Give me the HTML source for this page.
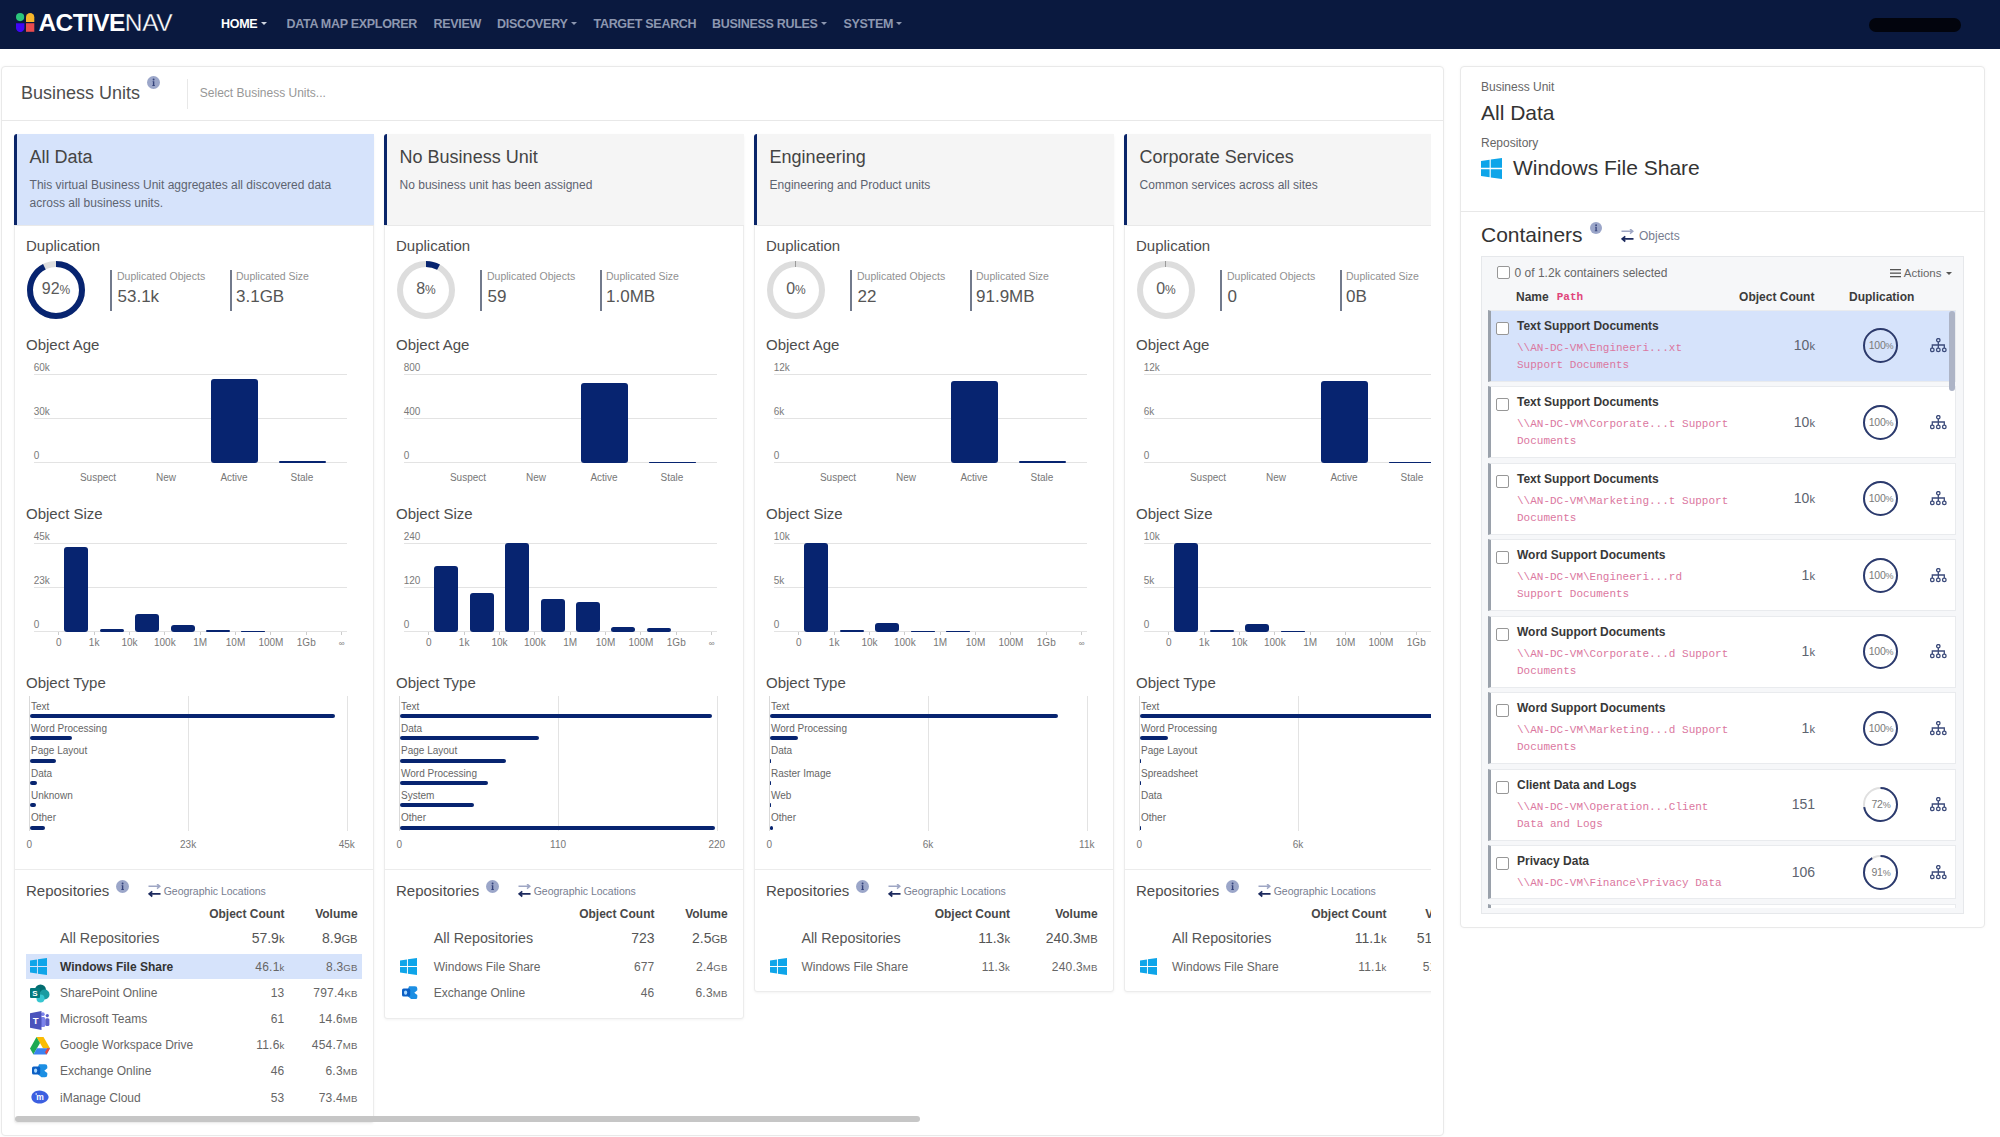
<!DOCTYPE html>
<html><head><meta charset="utf-8"><title>ActiveNav</title>
<style>
html,body{margin:0;padding:0;}
body{width:2000px;height:1137px;overflow:hidden;position:relative;background:#fff;font-family:"Liberation Sans", sans-serif;}
.t{position:absolute;white-space:nowrap;}
</style></head><body>
<div style="position:absolute;left:0.00px;top:0.00px;width:2000.00px;height:49.00px;background:#0a193f;"></div>
<svg style="position:absolute;left:15.8px;top:12.8px" width="19" height="19" viewBox="0 0 19 19">
<circle cx="4.1" cy="4.1" r="4.1" fill="#2cc57c"/>
<path d="M10 9 V4.2 A4.15 4.15 0 0 1 18.3 4.2 V9 Z" fill="#f7b52a"/>
<path d="M0 10.2 H8.4 V14.9 A4.2 4.2 0 0 1 0 14.9 Z" fill="#3f06f5"/>
<rect x="10" y="10.2" width="8.3" height="8.6" fill="#e94b4e"/>
</svg>
<div class="t" style="left:38.50px;top:10.76px;font-size:24.5px;line-height:24.5px;color:#fff;font-weight:400;font-family:'Liberation Sans', sans-serif;"><span style="font-weight:700;letter-spacing:-0.6px">ACTIVE</span><span style="font-weight:400;letter-spacing:-0.3px;-webkit-text-stroke:0.3px #0a193f">NAV</span></div>
<div class="t" style="left:221.00px;top:18.12px;font-size:12.5px;line-height:12.5px;color:#ffffff;font-weight:700;font-family:'Liberation Sans', sans-serif;letter-spacing:-0.3px;">HOME</div>
<div class="t" style="left:286.50px;top:18.12px;font-size:12.5px;line-height:12.5px;color:#8d97b0;font-weight:700;font-family:'Liberation Sans', sans-serif;letter-spacing:-0.3px;">DATA MAP EXPLORER</div>
<div class="t" style="left:433.50px;top:18.12px;font-size:12.5px;line-height:12.5px;color:#8d97b0;font-weight:700;font-family:'Liberation Sans', sans-serif;letter-spacing:-0.3px;">REVIEW</div>
<div class="t" style="left:497.00px;top:18.12px;font-size:12.5px;line-height:12.5px;color:#8d97b0;font-weight:700;font-family:'Liberation Sans', sans-serif;letter-spacing:-0.3px;">DISCOVERY</div>
<div class="t" style="left:593.50px;top:18.12px;font-size:12.5px;line-height:12.5px;color:#8d97b0;font-weight:700;font-family:'Liberation Sans', sans-serif;letter-spacing:-0.3px;">TARGET SEARCH</div>
<div class="t" style="left:712.00px;top:18.12px;font-size:12.5px;line-height:12.5px;color:#8d97b0;font-weight:700;font-family:'Liberation Sans', sans-serif;letter-spacing:-0.3px;">BUSINESS RULES</div>
<div class="t" style="left:843.50px;top:18.12px;font-size:12.5px;line-height:12.5px;color:#8d97b0;font-weight:700;font-family:'Liberation Sans', sans-serif;letter-spacing:-0.3px;">SYSTEM</div>
<div style="position:absolute;left:261px;top:22px;width:0;height:0;border-left:3px solid transparent;border-right:3px solid transparent;border-top:3px solid #cfd5e0;"></div>
<div style="position:absolute;left:571px;top:22px;width:0;height:0;border-left:3px solid transparent;border-right:3px solid transparent;border-top:3px solid #8d97b0;"></div>
<div style="position:absolute;left:821px;top:22px;width:0;height:0;border-left:3px solid transparent;border-right:3px solid transparent;border-top:3px solid #8d97b0;"></div>
<div style="position:absolute;left:895.5px;top:22px;width:0;height:0;border-left:3px solid transparent;border-right:3px solid transparent;border-top:3px solid #8d97b0;"></div>
<div style="position:absolute;left:1869.00px;top:17.50px;width:92.00px;height:14.50px;background:#02040d;border-radius:8px;"></div>
<div style="position:absolute;left:1.00px;top:66.00px;width:1443.00px;height:1070.00px;background:#fff;border:1px solid #e9e9e9;border-radius:4px;box-sizing:border-box;box-shadow:0 0 3px rgba(0,0,0,0.04);"></div>
<div class="t" style="left:21.00px;top:83.76px;font-size:18px;line-height:18px;color:#4d4d4d;font-weight:400;font-family:'Liberation Sans', sans-serif;">Business Units</div>
<svg style="position:absolute;left:147px;top:76px" width="13" height="13" viewBox="0 0 13 13"><circle cx="6.5" cy="6.5" r="6.5" fill="#9ba6c9"/><path d="M5.6 5.2 H7.3 V9.2 H8 V10 H5.2 V9.2 H5.9 V6 H5.6 Z" fill="#34427a"/><circle cx="6.6" cy="3.5" r="0.95" fill="#34427a"/></svg>
<div style="position:absolute;left:186.50px;top:79.00px;width:1.00px;height:30.00px;background:#e8e8e8;"></div>
<div class="t" style="left:199.80px;top:86.84px;font-size:12px;line-height:12px;color:#979797;font-weight:400;font-family:'Liberation Sans', sans-serif;">Select Business Units...</div>
<div style="position:absolute;left:1.00px;top:120.00px;width:1442.00px;height:1.00px;background:#e8e8e8;"></div>
<div style="position:absolute;left:0;top:0;width:1431px;height:1137px;overflow:hidden;">
<div style="position:absolute;left:14.00px;top:134.00px;width:360.00px;height:989.00px;background:#fff;border:1px solid #ececec;border-radius:3px;box-sizing:border-box;box-shadow:0 1px 3px rgba(0,0,0,0.05);"></div>
<div style="position:absolute;left:14.00px;top:134.00px;width:360.00px;height:91.00px;background:#d6e3fb;border-left:3px solid #0a2569;border-radius:3px 0 0 0;box-sizing:border-box;"></div>
<div style="position:absolute;left:14.00px;top:225.00px;width:360.00px;height:1.00px;background:#e9e9e9;"></div>
<div class="t" style="left:29.60px;top:148.06px;font-size:18px;line-height:18px;color:#444;font-weight:400;font-family:'Liberation Sans', sans-serif;">All Data</div>
<div class="t" style="left:29.60px;top:178.84px;font-size:12px;line-height:12px;color:#5d6370;font-weight:400;font-family:'Liberation Sans', sans-serif;">This virtual Business Unit aggregates all discovered data</div>
<div class="t" style="left:29.60px;top:196.84px;font-size:12px;line-height:12px;color:#5d6370;font-weight:400;font-family:'Liberation Sans', sans-serif;">across all business units.</div>
<div class="t" style="left:26.00px;top:238.30px;font-size:15px;line-height:15px;color:#4d4d4d;font-weight:400;font-family:'Liberation Sans', sans-serif;">Duplication</div>
<svg style="position:absolute;left:27.00px;top:261.00px" width="58" height="58" viewBox="0 0 58 58"><circle cx="29.0" cy="29.0" r="26.0" fill="none" stroke="#dddddd" stroke-width="6"/><circle cx="29.0" cy="29.0" r="26.0" fill="none" stroke="#072470" stroke-width="6" stroke-dasharray="150.29 163.36" transform="rotate(-90 29.0 29.0)"/></svg>
<div class="t" style="left:40.50px;top:281.46px;font-size:16px;line-height:16px;color:#5a5a5a;font-weight:400;font-family:'Liberation Sans', sans-serif;width:31px;text-align:center;">92<span style="font-size:12px">%</span></div>
<div style="position:absolute;left:110.00px;top:269.50px;width:2.00px;height:41.00px;background:#727a8c;"></div>
<div class="t" style="left:117.00px;top:271.11px;font-size:10.5px;line-height:10.5px;color:#909090;font-weight:400;font-family:'Liberation Sans', sans-serif;">Duplicated Objects</div>
<div class="t" style="left:117.50px;top:288.11px;font-size:17px;line-height:17px;color:#555;font-weight:400;font-family:'Liberation Sans', sans-serif;">53.1k</div>
<div style="position:absolute;left:229.50px;top:269.50px;width:2.00px;height:41.00px;background:#727a8c;"></div>
<div class="t" style="left:236.00px;top:271.11px;font-size:10.5px;line-height:10.5px;color:#909090;font-weight:400;font-family:'Liberation Sans', sans-serif;">Duplicated Size</div>
<div class="t" style="left:236.00px;top:288.11px;font-size:17px;line-height:17px;color:#555;font-weight:400;font-family:'Liberation Sans', sans-serif;">3.1GB</div>
<div class="t" style="left:26.00px;top:337.30px;font-size:15px;line-height:15px;color:#4d4d4d;font-weight:400;font-family:'Liberation Sans', sans-serif;">Object Age</div>
<div style="position:absolute;left:33.70px;top:373.80px;width:313.60px;height:1.00px;background:#e3e3e3;"></div>
<div class="t" style="left:33.70px;top:362.54px;font-size:10px;line-height:10px;color:#7a7a7a;font-weight:400;font-family:'Liberation Sans', sans-serif;">60k</div>
<div style="position:absolute;left:33.70px;top:417.90px;width:313.60px;height:1.00px;background:#e3e3e3;"></div>
<div class="t" style="left:33.70px;top:406.63px;font-size:10px;line-height:10px;color:#7a7a7a;font-weight:400;font-family:'Liberation Sans', sans-serif;">30k</div>
<div style="position:absolute;left:33.70px;top:462.10px;width:313.60px;height:1.00px;background:#e3e3e3;"></div>
<div class="t" style="left:33.70px;top:450.84px;font-size:10px;line-height:10px;color:#7a7a7a;font-weight:400;font-family:'Liberation Sans', sans-serif;">0</div>
<div class="t" style="left:58.00px;width:80px;text-align:center;top:472.94px;font-size:10px;line-height:10px;color:#777;font-weight:400;font-family:'Liberation Sans', sans-serif;">Suspect</div>
<div class="t" style="left:126.00px;width:80px;text-align:center;top:472.94px;font-size:10px;line-height:10px;color:#777;font-weight:400;font-family:'Liberation Sans', sans-serif;">New</div>
<div class="t" style="left:194.00px;width:80px;text-align:center;top:472.94px;font-size:10px;line-height:10px;color:#777;font-weight:400;font-family:'Liberation Sans', sans-serif;">Active</div>
<div style="position:absolute;left:210.50px;top:378.72px;width:47.00px;height:83.89px;background:#072470;border-radius:3px;"></div>
<div class="t" style="left:262.00px;width:80px;text-align:center;top:472.94px;font-size:10px;line-height:10px;color:#777;font-weight:400;font-family:'Liberation Sans', sans-serif;">Stale</div>
<div style="position:absolute;left:278.50px;top:460.83px;width:47.00px;height:1.77px;background:#072470;border-radius:3px;"></div>
<div class="t" style="left:26.00px;top:505.60px;font-size:15px;line-height:15px;color:#4d4d4d;font-weight:400;font-family:'Liberation Sans', sans-serif;">Object Size</div>
<div style="position:absolute;left:33.70px;top:542.90px;width:313.60px;height:1.00px;background:#e3e3e3;"></div>
<div class="t" style="left:33.70px;top:531.63px;font-size:10px;line-height:10px;color:#7a7a7a;font-weight:400;font-family:'Liberation Sans', sans-serif;">45k</div>
<div style="position:absolute;left:33.70px;top:586.80px;width:313.60px;height:1.00px;background:#e3e3e3;"></div>
<div class="t" style="left:33.70px;top:575.53px;font-size:10px;line-height:10px;color:#7a7a7a;font-weight:400;font-family:'Liberation Sans', sans-serif;">23k</div>
<div style="position:absolute;left:33.70px;top:631.10px;width:313.60px;height:1.00px;background:#e3e3e3;"></div>
<div class="t" style="left:33.70px;top:619.84px;font-size:10px;line-height:10px;color:#7a7a7a;font-weight:400;font-family:'Liberation Sans', sans-serif;">0</div>
<div style="position:absolute;left:58.30px;top:632.00px;width:1.00px;height:3.00px;background:#ccc;"></div>
<div class="t" style="left:38.80px;width:40px;text-align:center;top:637.93px;font-size:10px;line-height:10px;color:#777;font-weight:400;font-family:'Liberation Sans', sans-serif;">0</div>
<div style="position:absolute;left:93.65px;top:632.00px;width:1.00px;height:3.00px;background:#ccc;"></div>
<div class="t" style="left:74.15px;width:40px;text-align:center;top:637.93px;font-size:10px;line-height:10px;color:#777;font-weight:400;font-family:'Liberation Sans', sans-serif;">1k</div>
<div style="position:absolute;left:129.00px;top:632.00px;width:1.00px;height:3.00px;background:#ccc;"></div>
<div class="t" style="left:109.50px;width:40px;text-align:center;top:637.93px;font-size:10px;line-height:10px;color:#777;font-weight:400;font-family:'Liberation Sans', sans-serif;">10k</div>
<div style="position:absolute;left:164.35px;top:632.00px;width:1.00px;height:3.00px;background:#ccc;"></div>
<div class="t" style="left:144.85px;width:40px;text-align:center;top:637.93px;font-size:10px;line-height:10px;color:#777;font-weight:400;font-family:'Liberation Sans', sans-serif;">100k</div>
<div style="position:absolute;left:199.70px;top:632.00px;width:1.00px;height:3.00px;background:#ccc;"></div>
<div class="t" style="left:180.20px;width:40px;text-align:center;top:637.93px;font-size:10px;line-height:10px;color:#777;font-weight:400;font-family:'Liberation Sans', sans-serif;">1M</div>
<div style="position:absolute;left:235.05px;top:632.00px;width:1.00px;height:3.00px;background:#ccc;"></div>
<div class="t" style="left:215.55px;width:40px;text-align:center;top:637.93px;font-size:10px;line-height:10px;color:#777;font-weight:400;font-family:'Liberation Sans', sans-serif;">10M</div>
<div style="position:absolute;left:270.40px;top:632.00px;width:1.00px;height:3.00px;background:#ccc;"></div>
<div class="t" style="left:250.90px;width:40px;text-align:center;top:637.93px;font-size:10px;line-height:10px;color:#777;font-weight:400;font-family:'Liberation Sans', sans-serif;">100M</div>
<div style="position:absolute;left:305.75px;top:632.00px;width:1.00px;height:3.00px;background:#ccc;"></div>
<div class="t" style="left:286.25px;width:40px;text-align:center;top:637.93px;font-size:10px;line-height:10px;color:#777;font-weight:400;font-family:'Liberation Sans', sans-serif;">1Gb</div>
<div style="position:absolute;left:341.10px;top:632.00px;width:1.00px;height:3.00px;background:#ccc;"></div>
<div class="t" style="left:321.60px;width:40px;text-align:center;top:639.63px;font-size:8px;line-height:8px;color:#777;font-weight:400;font-family:'Liberation Sans', sans-serif;">&#8734;</div>
<div style="position:absolute;left:64.47px;top:547.37px;width:24.00px;height:84.23px;background:#072470;border-radius:3px;"></div>
<div style="position:absolute;left:99.83px;top:628.95px;width:24.00px;height:2.65px;background:#072470;border-radius:3px;"></div>
<div style="position:absolute;left:135.18px;top:613.96px;width:24.00px;height:17.64px;background:#072470;border-radius:3px;"></div>
<div style="position:absolute;left:170.53px;top:625.43px;width:24.00px;height:6.17px;background:#072470;border-radius:3px;"></div>
<div style="position:absolute;left:205.88px;top:629.84px;width:24.00px;height:1.76px;background:#072470;border-radius:3px;"></div>
<div style="position:absolute;left:241.23px;top:631.16px;width:24.00px;height:0.44px;background:#072470;border-radius:3px;"></div>
<div class="t" style="left:26.00px;top:674.90px;font-size:15px;line-height:15px;color:#4d4d4d;font-weight:400;font-family:'Liberation Sans', sans-serif;">Object Type</div>
<div style="position:absolute;left:29.00px;top:696.00px;width:1.00px;height:135.00px;background:#d9d9d9;"></div>
<div style="position:absolute;left:188.20px;top:696.00px;width:1.00px;height:135.00px;background:#e3e3e3;"></div>
<div style="position:absolute;left:346.80px;top:696.00px;width:1.00px;height:135.00px;background:#e3e3e3;"></div>
<div class="t" style="left:31.00px;top:701.53px;font-size:10px;line-height:10px;color:#666;font-weight:400;font-family:'Liberation Sans', sans-serif;">Text</div>
<div style="position:absolute;left:29.50px;top:714.00px;width:305.71px;height:4.00px;background:#072470;border-radius:2px;"></div>
<div class="t" style="left:31.00px;top:723.89px;font-size:10px;line-height:10px;color:#666;font-weight:400;font-family:'Liberation Sans', sans-serif;">Word Processing</div>
<div style="position:absolute;left:29.50px;top:736.36px;width:42.45px;height:4.00px;background:#072470;border-radius:2px;"></div>
<div class="t" style="left:31.00px;top:746.25px;font-size:10px;line-height:10px;color:#666;font-weight:400;font-family:'Liberation Sans', sans-serif;">Page Layout</div>
<div style="position:absolute;left:29.50px;top:758.72px;width:26.61px;height:4.00px;background:#072470;border-radius:2px;"></div>
<div class="t" style="left:31.00px;top:768.62px;font-size:10px;line-height:10px;color:#666;font-weight:400;font-family:'Liberation Sans', sans-serif;">Data</div>
<div style="position:absolute;left:29.50px;top:781.08px;width:7.92px;height:4.00px;background:#072470;border-radius:2px;"></div>
<div class="t" style="left:31.00px;top:790.98px;font-size:10px;line-height:10px;color:#666;font-weight:400;font-family:'Liberation Sans', sans-serif;">Unknown</div>
<div style="position:absolute;left:29.50px;top:803.44px;width:6.34px;height:4.00px;background:#072470;border-radius:2px;"></div>
<div class="t" style="left:31.00px;top:813.33px;font-size:10px;line-height:10px;color:#666;font-weight:400;font-family:'Liberation Sans', sans-serif;">Other</div>
<div style="position:absolute;left:29.50px;top:825.80px;width:15.52px;height:4.00px;background:#072470;border-radius:2px;"></div>
<div class="t" style="left:9.40px;width:40px;text-align:center;top:839.53px;font-size:10px;line-height:10px;color:#777;font-weight:400;font-family:'Liberation Sans', sans-serif;">0</div>
<div class="t" style="left:168.10px;width:40px;text-align:center;top:839.53px;font-size:10px;line-height:10px;color:#777;font-weight:400;font-family:'Liberation Sans', sans-serif;">23k</div>
<div class="t" style="left:326.80px;width:40px;text-align:center;top:839.53px;font-size:10px;line-height:10px;color:#777;font-weight:400;font-family:'Liberation Sans', sans-serif;">45k</div>
<div style="position:absolute;left:14.00px;top:869.00px;width:360.00px;height:1.00px;background:#ececec;"></div>
<div class="t" style="left:26.00px;top:882.90px;font-size:15px;line-height:15px;color:#4d4d4d;font-weight:400;font-family:'Liberation Sans', sans-serif;">Repositories</div>
<svg style="position:absolute;left:115.6px;top:880px" width="13" height="13" viewBox="0 0 13 13"><circle cx="6.5" cy="6.5" r="6.5" fill="#9ba6c9"/><path d="M5.6 5.2 H7.3 V9.2 H8 V10 H5.2 V9.2 H5.9 V6 H5.6 Z" fill="#34427a"/><circle cx="6.6" cy="3.5" r="0.95" fill="#34427a"/></svg>
<svg style="position:absolute;left:148px;top:884px" width="13" height="14" viewBox="0 0 13 14"><path d="M0.5 2.3 H11.5 M9 0 L11.8 2.3 L9 4.6" stroke="#9ea6c4" stroke-width="1.5" fill="none"/><path d="M12.5 9.9 H1.5 M4.3 7.3 L1.2 9.9 L4.3 12.5" stroke="#1c2a5e" stroke-width="1.7" fill="none"/></svg>
<div class="t" style="left:163.70px;top:886.11px;font-size:10.5px;line-height:10.5px;color:#777d90;font-weight:400;font-family:'Liberation Sans', sans-serif;">Geographic Locations</div>
<div class="t" style="left:164.50px;width:120px;text-align:right;top:908.34px;font-size:12px;line-height:12px;color:#484848;font-weight:700;font-family:'Liberation Sans', sans-serif;">Object Count</div>
<div class="t" style="left:277.60px;width:80px;text-align:right;top:908.34px;font-size:12px;line-height:12px;color:#484848;font-weight:700;font-family:'Liberation Sans', sans-serif;">Volume</div>
<div class="t" style="left:60.00px;top:930.90px;font-size:14.3px;line-height:14.3px;color:#555;font-weight:400;font-family:'Liberation Sans', sans-serif;">All Repositories</div>
<div class="t" style="left:184.50px;width:100px;text-align:right;top:931.15px;font-size:14px;line-height:14px;color:#555;font-weight:400;font-family:'Liberation Sans', sans-serif;">57.9<span style="font-size:0.8em">k</span></div>
<div class="t" style="left:257.60px;width:100px;text-align:right;top:931.15px;font-size:14px;line-height:14px;color:#555;font-weight:400;font-family:'Liberation Sans', sans-serif;">8.9<span style="font-size:0.8em">GB</span></div>
<div style="position:absolute;left:26.00px;top:954.30px;width:336.00px;height:25.10px;background:#d6e3fb;"></div>
<svg style="position:absolute;left:30px;top:957.8px" width="17" height="17" viewBox="0 0 20 20"><path d="M0 2.8 L8.2 1.7 V9.4 H0 Z M9.3 1.5 L20 0 V9.4 H9.3 Z M0 10.6 H8.2 V18.3 L0 17.2 Z M9.3 10.6 H20 V20 L9.3 18.5 Z" fill="#0ea5e9"/></svg>
<div class="t" style="left:60.00px;top:960.64px;font-size:12px;line-height:12px;color:#333;font-weight:700;font-family:'Liberation Sans', sans-serif;">Windows File Share</div>
<div class="t" style="left:184.50px;width:100px;text-align:right;top:960.64px;font-size:12px;line-height:12px;color:#666;font-weight:400;font-family:'Liberation Sans', sans-serif;letter-spacing:0.2px;">46.1<span style="font-size:0.8em">k</span></div>
<div class="t" style="left:257.60px;width:100px;text-align:right;top:960.64px;font-size:12px;line-height:12px;color:#666;font-weight:400;font-family:'Liberation Sans', sans-serif;letter-spacing:0.2px;">8.3<span style="font-size:0.8em">GB</span></div>
<svg style="position:absolute;left:30px;top:984.0px" width="20" height="19" viewBox="0 0 20 19"><circle cx="10.5" cy="6" r="5.5" fill="#036c70"/><circle cx="14.5" cy="10.5" r="5" fill="#1a9ba1"/><circle cx="10.5" cy="14.5" r="4" fill="#37c6d0"/><rect x="0" y="4" width="10" height="10" rx="1" fill="#03787c"/><text x="5" y="12" font-family="Liberation Sans" font-weight="700" font-size="8" fill="#fff" text-anchor="middle">S</text></svg>
<div class="t" style="left:60.00px;top:986.84px;font-size:12px;line-height:12px;color:#666;font-weight:400;font-family:'Liberation Sans', sans-serif;">SharePoint Online</div>
<div class="t" style="left:184.50px;width:100px;text-align:right;top:986.84px;font-size:12px;line-height:12px;color:#666;font-weight:400;font-family:'Liberation Sans', sans-serif;letter-spacing:0.2px;">13</div>
<div class="t" style="left:257.60px;width:100px;text-align:right;top:986.84px;font-size:12px;line-height:12px;color:#666;font-weight:400;font-family:'Liberation Sans', sans-serif;letter-spacing:0.2px;">797.4<span style="font-size:0.8em">KB</span></div>
<svg style="position:absolute;left:30px;top:1009.6999999999999px" width="20" height="21" viewBox="0 0 20 21"><circle cx="17.3" cy="5.6" r="1.6" fill="#5b5fc7"/><rect x="15.2" y="8.2" width="4.2" height="7.8" rx="1.5" fill="#5b5fc7"/><circle cx="12.8" cy="4.2" r="1.9" fill="#7b83eb"/><rect x="10.5" y="7" width="4.6" height="10" rx="1.5" fill="#7b83eb"/><path d="M0 3.3 L11.5 1 V20 L0 17.8 Z" fill="#4b53bc"/><text x="5.7" y="14" font-family="Liberation Sans" font-weight="700" font-size="9.5" fill="#fff" text-anchor="middle">T</text></svg>
<div class="t" style="left:60.00px;top:1013.04px;font-size:12px;line-height:12px;color:#666;font-weight:400;font-family:'Liberation Sans', sans-serif;">Microsoft Teams</div>
<div class="t" style="left:184.50px;width:100px;text-align:right;top:1013.04px;font-size:12px;line-height:12px;color:#666;font-weight:400;font-family:'Liberation Sans', sans-serif;letter-spacing:0.2px;">61</div>
<div class="t" style="left:257.60px;width:100px;text-align:right;top:1013.04px;font-size:12px;line-height:12px;color:#666;font-weight:400;font-family:'Liberation Sans', sans-serif;letter-spacing:0.2px;">14.6<span style="font-size:0.8em">MB</span></div>
<svg style="position:absolute;left:30px;top:1036.6999999999998px" width="20" height="18" viewBox="0 0 20 18"><path d="M6.5 0 L13.5 0 L20 11.3 L13 11.3 Z" fill="#fbbc04"/><path d="M6.5 0 L10 6.1 L3.4 17.6 L0 11.6 Z" fill="#1ea952"/><path d="M3.4 17.6 L16.6 17.6 L20 11.3 L6.9 11.3 Z" fill="#3b82f0"/><path d="M16.6 17.6 L20 11.3 L17.2 11.3 L15 15.2 Z" fill="#e8453c"/></svg>
<div class="t" style="left:60.00px;top:1039.24px;font-size:12px;line-height:12px;color:#666;font-weight:400;font-family:'Liberation Sans', sans-serif;">Google Workspace Drive</div>
<div class="t" style="left:184.50px;width:100px;text-align:right;top:1039.24px;font-size:12px;line-height:12px;color:#666;font-weight:400;font-family:'Liberation Sans', sans-serif;letter-spacing:0.2px;">11.6<span style="font-size:0.8em">k</span></div>
<div class="t" style="left:257.60px;width:100px;text-align:right;top:1039.24px;font-size:12px;line-height:12px;color:#666;font-weight:400;font-family:'Liberation Sans', sans-serif;letter-spacing:0.2px;">454.7<span style="font-size:0.8em">MB</span></div>
<svg style="position:absolute;left:32px;top:1064.3999999999999px" width="15.5" height="13.5" viewBox="0 0 15.5 13.5"><path d="M7 0.2 H13 A2.3 2.3 0 0 1 15.3 2.5 V4.3 L12.3 6.7 L15.3 9.1 V11 A2.3 2.3 0 0 1 13 13.3 H9.5 L6 10.5 V3 Z" fill="#1c8fe3"/><rect x="0" y="2.6" width="8.2" height="8" rx="1.6" fill="#0b5fc4"/><ellipse cx="3.6" cy="6.6" rx="1.6" ry="2.2" fill="#a9d8ff"/></svg>
<div class="t" style="left:60.00px;top:1065.44px;font-size:12px;line-height:12px;color:#666;font-weight:400;font-family:'Liberation Sans', sans-serif;">Exchange Online</div>
<div class="t" style="left:184.50px;width:100px;text-align:right;top:1065.44px;font-size:12px;line-height:12px;color:#666;font-weight:400;font-family:'Liberation Sans', sans-serif;letter-spacing:0.2px;">46</div>
<div class="t" style="left:257.60px;width:100px;text-align:right;top:1065.44px;font-size:12px;line-height:12px;color:#666;font-weight:400;font-family:'Liberation Sans', sans-serif;letter-spacing:0.2px;">6.3<span style="font-size:0.8em">MB</span></div>
<svg style="position:absolute;left:31px;top:1090.1px" width="18" height="14" viewBox="0 0 18 14"><path d="M8.5 0.4 C13.5 0.4 17.6 4.2 17.6 7 C17.6 10 13.5 13.6 8.5 13.6 C3.8 13.6 0.4 10.8 0.4 7 C0.4 3.2 3.8 0.4 8.5 0.4 Z" fill="#3c5fe0"/><text x="9" y="10.2" font-family="Liberation Sans" font-weight="700" font-size="8.5" fill="#fff" text-anchor="middle">m</text><circle cx="5.2" cy="4" r="0.8" fill="#fff"/></svg>
<div class="t" style="left:60.00px;top:1091.64px;font-size:12px;line-height:12px;color:#666;font-weight:400;font-family:'Liberation Sans', sans-serif;">iManage Cloud</div>
<div class="t" style="left:184.50px;width:100px;text-align:right;top:1091.64px;font-size:12px;line-height:12px;color:#666;font-weight:400;font-family:'Liberation Sans', sans-serif;letter-spacing:0.2px;">53</div>
<div class="t" style="left:257.60px;width:100px;text-align:right;top:1091.64px;font-size:12px;line-height:12px;color:#666;font-weight:400;font-family:'Liberation Sans', sans-serif;letter-spacing:0.2px;">73.4<span style="font-size:0.8em">MB</span></div>
<div style="position:absolute;left:384.00px;top:134.00px;width:360.00px;height:884.50px;background:#fff;border:1px solid #ececec;border-radius:3px;box-sizing:border-box;box-shadow:0 1px 3px rgba(0,0,0,0.05);"></div>
<div style="position:absolute;left:384.00px;top:134.00px;width:360.00px;height:91.00px;background:#f5f5f5;border-left:3px solid #0a2569;border-radius:3px 0 0 0;box-sizing:border-box;"></div>
<div style="position:absolute;left:384.00px;top:225.00px;width:360.00px;height:1.00px;background:#e9e9e9;"></div>
<div class="t" style="left:399.60px;top:148.06px;font-size:18px;line-height:18px;color:#444;font-weight:400;font-family:'Liberation Sans', sans-serif;">No Business Unit</div>
<div class="t" style="left:399.60px;top:178.84px;font-size:12px;line-height:12px;color:#5d6370;font-weight:400;font-family:'Liberation Sans', sans-serif;">No business unit has been assigned</div>
<div class="t" style="left:396.00px;top:238.30px;font-size:15px;line-height:15px;color:#4d4d4d;font-weight:400;font-family:'Liberation Sans', sans-serif;">Duplication</div>
<svg style="position:absolute;left:397.00px;top:261.00px" width="58" height="58" viewBox="0 0 58 58"><circle cx="29.0" cy="29.0" r="26.0" fill="none" stroke="#dddddd" stroke-width="6"/><circle cx="29.0" cy="29.0" r="26.0" fill="none" stroke="#072470" stroke-width="6" stroke-dasharray="13.07 163.36" transform="rotate(-90 29.0 29.0)"/></svg>
<div class="t" style="left:410.50px;top:281.46px;font-size:16px;line-height:16px;color:#5a5a5a;font-weight:400;font-family:'Liberation Sans', sans-serif;width:31px;text-align:center;">8<span style="font-size:12px">%</span></div>
<div style="position:absolute;left:480.00px;top:269.50px;width:2.00px;height:41.00px;background:#727a8c;"></div>
<div class="t" style="left:487.00px;top:271.11px;font-size:10.5px;line-height:10.5px;color:#909090;font-weight:400;font-family:'Liberation Sans', sans-serif;">Duplicated Objects</div>
<div class="t" style="left:487.50px;top:288.11px;font-size:17px;line-height:17px;color:#555;font-weight:400;font-family:'Liberation Sans', sans-serif;">59</div>
<div style="position:absolute;left:599.50px;top:269.50px;width:2.00px;height:41.00px;background:#727a8c;"></div>
<div class="t" style="left:606.00px;top:271.11px;font-size:10.5px;line-height:10.5px;color:#909090;font-weight:400;font-family:'Liberation Sans', sans-serif;">Duplicated Size</div>
<div class="t" style="left:606.00px;top:288.11px;font-size:17px;line-height:17px;color:#555;font-weight:400;font-family:'Liberation Sans', sans-serif;">1.0MB</div>
<div class="t" style="left:396.00px;top:337.30px;font-size:15px;line-height:15px;color:#4d4d4d;font-weight:400;font-family:'Liberation Sans', sans-serif;">Object Age</div>
<div style="position:absolute;left:403.70px;top:373.80px;width:313.60px;height:1.00px;background:#e3e3e3;"></div>
<div class="t" style="left:403.70px;top:362.54px;font-size:10px;line-height:10px;color:#7a7a7a;font-weight:400;font-family:'Liberation Sans', sans-serif;">800</div>
<div style="position:absolute;left:403.70px;top:417.90px;width:313.60px;height:1.00px;background:#e3e3e3;"></div>
<div class="t" style="left:403.70px;top:406.63px;font-size:10px;line-height:10px;color:#7a7a7a;font-weight:400;font-family:'Liberation Sans', sans-serif;">400</div>
<div style="position:absolute;left:403.70px;top:462.10px;width:313.60px;height:1.00px;background:#e3e3e3;"></div>
<div class="t" style="left:403.70px;top:450.84px;font-size:10px;line-height:10px;color:#7a7a7a;font-weight:400;font-family:'Liberation Sans', sans-serif;">0</div>
<div class="t" style="left:428.00px;width:80px;text-align:center;top:472.94px;font-size:10px;line-height:10px;color:#777;font-weight:400;font-family:'Liberation Sans', sans-serif;">Suspect</div>
<div class="t" style="left:496.00px;width:80px;text-align:center;top:472.94px;font-size:10px;line-height:10px;color:#777;font-weight:400;font-family:'Liberation Sans', sans-serif;">New</div>
<div class="t" style="left:564.00px;width:80px;text-align:center;top:472.94px;font-size:10px;line-height:10px;color:#777;font-weight:400;font-family:'Liberation Sans', sans-serif;">Active</div>
<div style="position:absolute;left:580.50px;top:383.13px;width:47.00px;height:79.47px;background:#072470;border-radius:3px;"></div>
<div class="t" style="left:632.00px;width:80px;text-align:center;top:472.94px;font-size:10px;line-height:10px;color:#777;font-weight:400;font-family:'Liberation Sans', sans-serif;">Stale</div>
<div style="position:absolute;left:648.50px;top:462.16px;width:47.00px;height:0.44px;background:#072470;border-radius:3px;"></div>
<div class="t" style="left:396.00px;top:505.60px;font-size:15px;line-height:15px;color:#4d4d4d;font-weight:400;font-family:'Liberation Sans', sans-serif;">Object Size</div>
<div style="position:absolute;left:403.70px;top:542.90px;width:313.60px;height:1.00px;background:#e3e3e3;"></div>
<div class="t" style="left:403.70px;top:531.63px;font-size:10px;line-height:10px;color:#7a7a7a;font-weight:400;font-family:'Liberation Sans', sans-serif;">240</div>
<div style="position:absolute;left:403.70px;top:586.80px;width:313.60px;height:1.00px;background:#e3e3e3;"></div>
<div class="t" style="left:403.70px;top:575.53px;font-size:10px;line-height:10px;color:#7a7a7a;font-weight:400;font-family:'Liberation Sans', sans-serif;">120</div>
<div style="position:absolute;left:403.70px;top:631.10px;width:313.60px;height:1.00px;background:#e3e3e3;"></div>
<div class="t" style="left:403.70px;top:619.84px;font-size:10px;line-height:10px;color:#7a7a7a;font-weight:400;font-family:'Liberation Sans', sans-serif;">0</div>
<div style="position:absolute;left:428.30px;top:632.00px;width:1.00px;height:3.00px;background:#ccc;"></div>
<div class="t" style="left:408.80px;width:40px;text-align:center;top:637.93px;font-size:10px;line-height:10px;color:#777;font-weight:400;font-family:'Liberation Sans', sans-serif;">0</div>
<div style="position:absolute;left:463.65px;top:632.00px;width:1.00px;height:3.00px;background:#ccc;"></div>
<div class="t" style="left:444.15px;width:40px;text-align:center;top:637.93px;font-size:10px;line-height:10px;color:#777;font-weight:400;font-family:'Liberation Sans', sans-serif;">1k</div>
<div style="position:absolute;left:499.00px;top:632.00px;width:1.00px;height:3.00px;background:#ccc;"></div>
<div class="t" style="left:479.50px;width:40px;text-align:center;top:637.93px;font-size:10px;line-height:10px;color:#777;font-weight:400;font-family:'Liberation Sans', sans-serif;">10k</div>
<div style="position:absolute;left:534.35px;top:632.00px;width:1.00px;height:3.00px;background:#ccc;"></div>
<div class="t" style="left:514.85px;width:40px;text-align:center;top:637.93px;font-size:10px;line-height:10px;color:#777;font-weight:400;font-family:'Liberation Sans', sans-serif;">100k</div>
<div style="position:absolute;left:569.70px;top:632.00px;width:1.00px;height:3.00px;background:#ccc;"></div>
<div class="t" style="left:550.20px;width:40px;text-align:center;top:637.93px;font-size:10px;line-height:10px;color:#777;font-weight:400;font-family:'Liberation Sans', sans-serif;">1M</div>
<div style="position:absolute;left:605.05px;top:632.00px;width:1.00px;height:3.00px;background:#ccc;"></div>
<div class="t" style="left:585.55px;width:40px;text-align:center;top:637.93px;font-size:10px;line-height:10px;color:#777;font-weight:400;font-family:'Liberation Sans', sans-serif;">10M</div>
<div style="position:absolute;left:640.40px;top:632.00px;width:1.00px;height:3.00px;background:#ccc;"></div>
<div class="t" style="left:620.90px;width:40px;text-align:center;top:637.93px;font-size:10px;line-height:10px;color:#777;font-weight:400;font-family:'Liberation Sans', sans-serif;">100M</div>
<div style="position:absolute;left:675.75px;top:632.00px;width:1.00px;height:3.00px;background:#ccc;"></div>
<div class="t" style="left:656.25px;width:40px;text-align:center;top:637.93px;font-size:10px;line-height:10px;color:#777;font-weight:400;font-family:'Liberation Sans', sans-serif;">1Gb</div>
<div style="position:absolute;left:711.10px;top:632.00px;width:1.00px;height:3.00px;background:#ccc;"></div>
<div class="t" style="left:691.60px;width:40px;text-align:center;top:639.63px;font-size:8px;line-height:8px;color:#777;font-weight:400;font-family:'Liberation Sans', sans-serif;">&#8734;</div>
<div style="position:absolute;left:434.48px;top:566.33px;width:24.00px;height:65.27px;background:#072470;border-radius:3px;"></div>
<div style="position:absolute;left:469.83px;top:592.79px;width:24.00px;height:38.81px;background:#072470;border-radius:3px;"></div>
<div style="position:absolute;left:505.17px;top:543.40px;width:24.00px;height:88.20px;background:#072470;border-radius:3px;"></div>
<div style="position:absolute;left:540.52px;top:598.97px;width:24.00px;height:32.63px;background:#072470;border-radius:3px;"></div>
<div style="position:absolute;left:575.88px;top:602.49px;width:24.00px;height:29.11px;background:#072470;border-radius:3px;"></div>
<div style="position:absolute;left:611.23px;top:627.19px;width:24.00px;height:4.41px;background:#072470;border-radius:3px;"></div>
<div style="position:absolute;left:646.58px;top:628.07px;width:24.00px;height:3.53px;background:#072470;border-radius:3px;"></div>
<div class="t" style="left:396.00px;top:674.90px;font-size:15px;line-height:15px;color:#4d4d4d;font-weight:400;font-family:'Liberation Sans', sans-serif;">Object Type</div>
<div style="position:absolute;left:399.00px;top:696.00px;width:1.00px;height:135.00px;background:#d9d9d9;"></div>
<div style="position:absolute;left:558.20px;top:696.00px;width:1.00px;height:135.00px;background:#e3e3e3;"></div>
<div style="position:absolute;left:716.80px;top:696.00px;width:1.00px;height:135.00px;background:#e3e3e3;"></div>
<div class="t" style="left:401.00px;top:701.53px;font-size:10px;line-height:10px;color:#666;font-weight:400;font-family:'Liberation Sans', sans-serif;">Text</div>
<div style="position:absolute;left:399.50px;top:714.00px;width:312.05px;height:4.00px;background:#072470;border-radius:2px;"></div>
<div class="t" style="left:401.00px;top:723.89px;font-size:10px;line-height:10px;color:#666;font-weight:400;font-family:'Liberation Sans', sans-serif;">Data</div>
<div style="position:absolute;left:399.50px;top:736.36px;width:139.39px;height:4.00px;background:#072470;border-radius:2px;"></div>
<div class="t" style="left:401.00px;top:746.25px;font-size:10px;line-height:10px;color:#666;font-weight:400;font-family:'Liberation Sans', sans-serif;">Page Layout</div>
<div style="position:absolute;left:399.50px;top:758.72px;width:106.13px;height:4.00px;background:#072470;border-radius:2px;"></div>
<div class="t" style="left:401.00px;top:768.62px;font-size:10px;line-height:10px;color:#666;font-weight:400;font-family:'Liberation Sans', sans-serif;">Word Processing</div>
<div style="position:absolute;left:399.50px;top:781.08px;width:88.70px;height:4.00px;background:#072470;border-radius:2px;"></div>
<div class="t" style="left:401.00px;top:790.98px;font-size:10px;line-height:10px;color:#666;font-weight:400;font-family:'Liberation Sans', sans-serif;">System</div>
<div style="position:absolute;left:399.50px;top:803.44px;width:74.45px;height:4.00px;background:#072470;border-radius:2px;"></div>
<div class="t" style="left:401.00px;top:813.33px;font-size:10px;line-height:10px;color:#666;font-weight:400;font-family:'Liberation Sans', sans-serif;">Other</div>
<div style="position:absolute;left:399.50px;top:825.80px;width:315.22px;height:4.00px;background:#072470;border-radius:2px;"></div>
<div class="t" style="left:379.40px;width:40px;text-align:center;top:839.53px;font-size:10px;line-height:10px;color:#777;font-weight:400;font-family:'Liberation Sans', sans-serif;">0</div>
<div class="t" style="left:538.10px;width:40px;text-align:center;top:839.53px;font-size:10px;line-height:10px;color:#777;font-weight:400;font-family:'Liberation Sans', sans-serif;">110</div>
<div class="t" style="left:696.80px;width:40px;text-align:center;top:839.53px;font-size:10px;line-height:10px;color:#777;font-weight:400;font-family:'Liberation Sans', sans-serif;">220</div>
<div style="position:absolute;left:384.00px;top:869.00px;width:360.00px;height:1.00px;background:#ececec;"></div>
<div class="t" style="left:396.00px;top:882.90px;font-size:15px;line-height:15px;color:#4d4d4d;font-weight:400;font-family:'Liberation Sans', sans-serif;">Repositories</div>
<svg style="position:absolute;left:485.6px;top:880px" width="13" height="13" viewBox="0 0 13 13"><circle cx="6.5" cy="6.5" r="6.5" fill="#9ba6c9"/><path d="M5.6 5.2 H7.3 V9.2 H8 V10 H5.2 V9.2 H5.9 V6 H5.6 Z" fill="#34427a"/><circle cx="6.6" cy="3.5" r="0.95" fill="#34427a"/></svg>
<svg style="position:absolute;left:518px;top:884px" width="13" height="14" viewBox="0 0 13 14"><path d="M0.5 2.3 H11.5 M9 0 L11.8 2.3 L9 4.6" stroke="#9ea6c4" stroke-width="1.5" fill="none"/><path d="M12.5 9.9 H1.5 M4.3 7.3 L1.2 9.9 L4.3 12.5" stroke="#1c2a5e" stroke-width="1.7" fill="none"/></svg>
<div class="t" style="left:533.70px;top:886.11px;font-size:10.5px;line-height:10.5px;color:#777d90;font-weight:400;font-family:'Liberation Sans', sans-serif;">Geographic Locations</div>
<div class="t" style="left:534.50px;width:120px;text-align:right;top:908.34px;font-size:12px;line-height:12px;color:#484848;font-weight:700;font-family:'Liberation Sans', sans-serif;">Object Count</div>
<div class="t" style="left:647.60px;width:80px;text-align:right;top:908.34px;font-size:12px;line-height:12px;color:#484848;font-weight:700;font-family:'Liberation Sans', sans-serif;">Volume</div>
<div class="t" style="left:433.80px;top:930.90px;font-size:14.3px;line-height:14.3px;color:#555;font-weight:400;font-family:'Liberation Sans', sans-serif;">All Repositories</div>
<div class="t" style="left:554.50px;width:100px;text-align:right;top:931.15px;font-size:14px;line-height:14px;color:#555;font-weight:400;font-family:'Liberation Sans', sans-serif;">723</div>
<div class="t" style="left:627.60px;width:100px;text-align:right;top:931.15px;font-size:14px;line-height:14px;color:#555;font-weight:400;font-family:'Liberation Sans', sans-serif;">2.5<span style="font-size:0.8em">GB</span></div>
<svg style="position:absolute;left:400px;top:957.8px" width="17" height="17" viewBox="0 0 20 20"><path d="M0 2.8 L8.2 1.7 V9.4 H0 Z M9.3 1.5 L20 0 V9.4 H9.3 Z M0 10.6 H8.2 V18.3 L0 17.2 Z M9.3 10.6 H20 V20 L9.3 18.5 Z" fill="#0ea5e9"/></svg>
<div class="t" style="left:433.80px;top:960.64px;font-size:12px;line-height:12px;color:#666;font-weight:400;font-family:'Liberation Sans', sans-serif;">Windows File Share</div>
<div class="t" style="left:554.50px;width:100px;text-align:right;top:960.64px;font-size:12px;line-height:12px;color:#666;font-weight:400;font-family:'Liberation Sans', sans-serif;letter-spacing:0.2px;">677</div>
<div class="t" style="left:627.60px;width:100px;text-align:right;top:960.64px;font-size:12px;line-height:12px;color:#666;font-weight:400;font-family:'Liberation Sans', sans-serif;letter-spacing:0.2px;">2.4<span style="font-size:0.8em">GB</span></div>
<svg style="position:absolute;left:402px;top:985.8px" width="15.5" height="13.5" viewBox="0 0 15.5 13.5"><path d="M7 0.2 H13 A2.3 2.3 0 0 1 15.3 2.5 V4.3 L12.3 6.7 L15.3 9.1 V11 A2.3 2.3 0 0 1 13 13.3 H9.5 L6 10.5 V3 Z" fill="#1c8fe3"/><rect x="0" y="2.6" width="8.2" height="8" rx="1.6" fill="#0b5fc4"/><ellipse cx="3.6" cy="6.6" rx="1.6" ry="2.2" fill="#a9d8ff"/></svg>
<div class="t" style="left:433.80px;top:986.84px;font-size:12px;line-height:12px;color:#666;font-weight:400;font-family:'Liberation Sans', sans-serif;">Exchange Online</div>
<div class="t" style="left:554.50px;width:100px;text-align:right;top:986.84px;font-size:12px;line-height:12px;color:#666;font-weight:400;font-family:'Liberation Sans', sans-serif;letter-spacing:0.2px;">46</div>
<div class="t" style="left:627.60px;width:100px;text-align:right;top:986.84px;font-size:12px;line-height:12px;color:#666;font-weight:400;font-family:'Liberation Sans', sans-serif;letter-spacing:0.2px;">6.3<span style="font-size:0.8em">MB</span></div>
<div style="position:absolute;left:754.00px;top:134.00px;width:360.00px;height:858.00px;background:#fff;border:1px solid #ececec;border-radius:3px;box-sizing:border-box;box-shadow:0 1px 3px rgba(0,0,0,0.05);"></div>
<div style="position:absolute;left:754.00px;top:134.00px;width:360.00px;height:91.00px;background:#f5f5f5;border-left:3px solid #0a2569;border-radius:3px 0 0 0;box-sizing:border-box;"></div>
<div style="position:absolute;left:754.00px;top:225.00px;width:360.00px;height:1.00px;background:#e9e9e9;"></div>
<div class="t" style="left:769.60px;top:148.06px;font-size:18px;line-height:18px;color:#444;font-weight:400;font-family:'Liberation Sans', sans-serif;">Engineering</div>
<div class="t" style="left:769.60px;top:178.84px;font-size:12px;line-height:12px;color:#5d6370;font-weight:400;font-family:'Liberation Sans', sans-serif;">Engineering and Product units</div>
<div class="t" style="left:766.00px;top:238.30px;font-size:15px;line-height:15px;color:#4d4d4d;font-weight:400;font-family:'Liberation Sans', sans-serif;">Duplication</div>
<svg style="position:absolute;left:767.00px;top:261.00px" width="58" height="58" viewBox="0 0 58 58"><circle cx="29.0" cy="29.0" r="26.0" fill="none" stroke="#dddddd" stroke-width="6"/></svg>
<div class="t" style="left:780.50px;top:281.46px;font-size:16px;line-height:16px;color:#5a5a5a;font-weight:400;font-family:'Liberation Sans', sans-serif;width:31px;text-align:center;">0<span style="font-size:12px">%</span></div>
<div style="position:absolute;left:794.90px;top:261.00px;width:1.00px;height:6.00px;background:#9a9a9a;"></div>
<div style="position:absolute;left:850.00px;top:269.50px;width:2.00px;height:41.00px;background:#727a8c;"></div>
<div class="t" style="left:857.00px;top:271.11px;font-size:10.5px;line-height:10.5px;color:#909090;font-weight:400;font-family:'Liberation Sans', sans-serif;">Duplicated Objects</div>
<div class="t" style="left:857.50px;top:288.11px;font-size:17px;line-height:17px;color:#555;font-weight:400;font-family:'Liberation Sans', sans-serif;">22</div>
<div style="position:absolute;left:969.50px;top:269.50px;width:2.00px;height:41.00px;background:#727a8c;"></div>
<div class="t" style="left:976.00px;top:271.11px;font-size:10.5px;line-height:10.5px;color:#909090;font-weight:400;font-family:'Liberation Sans', sans-serif;">Duplicated Size</div>
<div class="t" style="left:976.00px;top:288.11px;font-size:17px;line-height:17px;color:#555;font-weight:400;font-family:'Liberation Sans', sans-serif;">91.9MB</div>
<div class="t" style="left:766.00px;top:337.30px;font-size:15px;line-height:15px;color:#4d4d4d;font-weight:400;font-family:'Liberation Sans', sans-serif;">Object Age</div>
<div style="position:absolute;left:773.70px;top:373.80px;width:313.60px;height:1.00px;background:#e3e3e3;"></div>
<div class="t" style="left:773.70px;top:362.54px;font-size:10px;line-height:10px;color:#7a7a7a;font-weight:400;font-family:'Liberation Sans', sans-serif;">12k</div>
<div style="position:absolute;left:773.70px;top:417.90px;width:313.60px;height:1.00px;background:#e3e3e3;"></div>
<div class="t" style="left:773.70px;top:406.63px;font-size:10px;line-height:10px;color:#7a7a7a;font-weight:400;font-family:'Liberation Sans', sans-serif;">6k</div>
<div style="position:absolute;left:773.70px;top:462.10px;width:313.60px;height:1.00px;background:#e3e3e3;"></div>
<div class="t" style="left:773.70px;top:450.84px;font-size:10px;line-height:10px;color:#7a7a7a;font-weight:400;font-family:'Liberation Sans', sans-serif;">0</div>
<div class="t" style="left:798.00px;width:80px;text-align:center;top:472.94px;font-size:10px;line-height:10px;color:#777;font-weight:400;font-family:'Liberation Sans', sans-serif;">Suspect</div>
<div class="t" style="left:866.00px;width:80px;text-align:center;top:472.94px;font-size:10px;line-height:10px;color:#777;font-weight:400;font-family:'Liberation Sans', sans-serif;">New</div>
<div class="t" style="left:934.00px;width:80px;text-align:center;top:472.94px;font-size:10px;line-height:10px;color:#777;font-weight:400;font-family:'Liberation Sans', sans-serif;">Active</div>
<div style="position:absolute;left:950.50px;top:381.36px;width:47.00px;height:81.24px;background:#072470;border-radius:3px;"></div>
<div class="t" style="left:1002.00px;width:80px;text-align:center;top:472.94px;font-size:10px;line-height:10px;color:#777;font-weight:400;font-family:'Liberation Sans', sans-serif;">Stale</div>
<div style="position:absolute;left:1018.50px;top:460.83px;width:47.00px;height:1.77px;background:#072470;border-radius:3px;"></div>
<div class="t" style="left:766.00px;top:505.60px;font-size:15px;line-height:15px;color:#4d4d4d;font-weight:400;font-family:'Liberation Sans', sans-serif;">Object Size</div>
<div style="position:absolute;left:773.70px;top:542.90px;width:313.60px;height:1.00px;background:#e3e3e3;"></div>
<div class="t" style="left:773.70px;top:531.63px;font-size:10px;line-height:10px;color:#7a7a7a;font-weight:400;font-family:'Liberation Sans', sans-serif;">10k</div>
<div style="position:absolute;left:773.70px;top:586.80px;width:313.60px;height:1.00px;background:#e3e3e3;"></div>
<div class="t" style="left:773.70px;top:575.53px;font-size:10px;line-height:10px;color:#7a7a7a;font-weight:400;font-family:'Liberation Sans', sans-serif;">5k</div>
<div style="position:absolute;left:773.70px;top:631.10px;width:313.60px;height:1.00px;background:#e3e3e3;"></div>
<div class="t" style="left:773.70px;top:619.84px;font-size:10px;line-height:10px;color:#7a7a7a;font-weight:400;font-family:'Liberation Sans', sans-serif;">0</div>
<div style="position:absolute;left:798.30px;top:632.00px;width:1.00px;height:3.00px;background:#ccc;"></div>
<div class="t" style="left:778.80px;width:40px;text-align:center;top:637.93px;font-size:10px;line-height:10px;color:#777;font-weight:400;font-family:'Liberation Sans', sans-serif;">0</div>
<div style="position:absolute;left:833.65px;top:632.00px;width:1.00px;height:3.00px;background:#ccc;"></div>
<div class="t" style="left:814.15px;width:40px;text-align:center;top:637.93px;font-size:10px;line-height:10px;color:#777;font-weight:400;font-family:'Liberation Sans', sans-serif;">1k</div>
<div style="position:absolute;left:869.00px;top:632.00px;width:1.00px;height:3.00px;background:#ccc;"></div>
<div class="t" style="left:849.50px;width:40px;text-align:center;top:637.93px;font-size:10px;line-height:10px;color:#777;font-weight:400;font-family:'Liberation Sans', sans-serif;">10k</div>
<div style="position:absolute;left:904.35px;top:632.00px;width:1.00px;height:3.00px;background:#ccc;"></div>
<div class="t" style="left:884.85px;width:40px;text-align:center;top:637.93px;font-size:10px;line-height:10px;color:#777;font-weight:400;font-family:'Liberation Sans', sans-serif;">100k</div>
<div style="position:absolute;left:939.70px;top:632.00px;width:1.00px;height:3.00px;background:#ccc;"></div>
<div class="t" style="left:920.20px;width:40px;text-align:center;top:637.93px;font-size:10px;line-height:10px;color:#777;font-weight:400;font-family:'Liberation Sans', sans-serif;">1M</div>
<div style="position:absolute;left:975.05px;top:632.00px;width:1.00px;height:3.00px;background:#ccc;"></div>
<div class="t" style="left:955.55px;width:40px;text-align:center;top:637.93px;font-size:10px;line-height:10px;color:#777;font-weight:400;font-family:'Liberation Sans', sans-serif;">10M</div>
<div style="position:absolute;left:1010.40px;top:632.00px;width:1.00px;height:3.00px;background:#ccc;"></div>
<div class="t" style="left:990.90px;width:40px;text-align:center;top:637.93px;font-size:10px;line-height:10px;color:#777;font-weight:400;font-family:'Liberation Sans', sans-serif;">100M</div>
<div style="position:absolute;left:1045.75px;top:632.00px;width:1.00px;height:3.00px;background:#ccc;"></div>
<div class="t" style="left:1026.25px;width:40px;text-align:center;top:637.93px;font-size:10px;line-height:10px;color:#777;font-weight:400;font-family:'Liberation Sans', sans-serif;">1Gb</div>
<div style="position:absolute;left:1081.10px;top:632.00px;width:1.00px;height:3.00px;background:#ccc;"></div>
<div class="t" style="left:1061.60px;width:40px;text-align:center;top:639.63px;font-size:8px;line-height:8px;color:#777;font-weight:400;font-family:'Liberation Sans', sans-serif;">&#8734;</div>
<div style="position:absolute;left:804.47px;top:543.40px;width:24.00px;height:88.20px;background:#072470;border-radius:3px;"></div>
<div style="position:absolute;left:839.82px;top:629.84px;width:24.00px;height:1.76px;background:#072470;border-radius:3px;"></div>
<div style="position:absolute;left:875.17px;top:622.78px;width:24.00px;height:8.82px;background:#072470;border-radius:3px;"></div>
<div style="position:absolute;left:910.52px;top:631.16px;width:24.00px;height:0.44px;background:#072470;border-radius:3px;"></div>
<div style="position:absolute;left:945.88px;top:631.42px;width:24.00px;height:0.18px;background:#072470;border-radius:3px;"></div>
<div class="t" style="left:766.00px;top:674.90px;font-size:15px;line-height:15px;color:#4d4d4d;font-weight:400;font-family:'Liberation Sans', sans-serif;">Object Type</div>
<div style="position:absolute;left:769.00px;top:696.00px;width:1.00px;height:135.00px;background:#d9d9d9;"></div>
<div style="position:absolute;left:928.20px;top:696.00px;width:1.00px;height:135.00px;background:#e3e3e3;"></div>
<div style="position:absolute;left:1086.80px;top:696.00px;width:1.00px;height:135.00px;background:#e3e3e3;"></div>
<div class="t" style="left:771.00px;top:701.53px;font-size:10px;line-height:10px;color:#666;font-weight:400;font-family:'Liberation Sans', sans-serif;">Text</div>
<div style="position:absolute;left:769.50px;top:714.00px;width:288.29px;height:4.00px;background:#072470;border-radius:2px;"></div>
<div class="t" style="left:771.00px;top:723.89px;font-size:10px;line-height:10px;color:#666;font-weight:400;font-family:'Liberation Sans', sans-serif;">Word Processing</div>
<div style="position:absolute;left:769.50px;top:736.36px;width:28.51px;height:4.00px;background:#072470;border-radius:2px;"></div>
<div class="t" style="left:771.00px;top:746.25px;font-size:10px;line-height:10px;color:#666;font-weight:400;font-family:'Liberation Sans', sans-serif;">Data</div>
<div style="position:absolute;left:769.50px;top:758.72px;width:1.50px;height:4.00px;background:#072470;border-radius:2px;"></div>
<div class="t" style="left:771.00px;top:768.62px;font-size:10px;line-height:10px;color:#666;font-weight:400;font-family:'Liberation Sans', sans-serif;">Raster Image</div>
<div style="position:absolute;left:769.50px;top:781.08px;width:1.50px;height:4.00px;background:#072470;border-radius:2px;"></div>
<div class="t" style="left:771.00px;top:790.98px;font-size:10px;line-height:10px;color:#666;font-weight:400;font-family:'Liberation Sans', sans-serif;">Web</div>
<div style="position:absolute;left:769.50px;top:803.44px;width:1.50px;height:4.00px;background:#072470;border-radius:2px;"></div>
<div class="t" style="left:771.00px;top:813.33px;font-size:10px;line-height:10px;color:#666;font-weight:400;font-family:'Liberation Sans', sans-serif;">Other</div>
<div style="position:absolute;left:769.50px;top:825.80px;width:3.17px;height:4.00px;background:#072470;border-radius:2px;"></div>
<div class="t" style="left:749.40px;width:40px;text-align:center;top:839.53px;font-size:10px;line-height:10px;color:#777;font-weight:400;font-family:'Liberation Sans', sans-serif;">0</div>
<div class="t" style="left:908.10px;width:40px;text-align:center;top:839.53px;font-size:10px;line-height:10px;color:#777;font-weight:400;font-family:'Liberation Sans', sans-serif;">6k</div>
<div class="t" style="left:1066.80px;width:40px;text-align:center;top:839.53px;font-size:10px;line-height:10px;color:#777;font-weight:400;font-family:'Liberation Sans', sans-serif;">11k</div>
<div style="position:absolute;left:754.00px;top:869.00px;width:360.00px;height:1.00px;background:#ececec;"></div>
<div class="t" style="left:766.00px;top:882.90px;font-size:15px;line-height:15px;color:#4d4d4d;font-weight:400;font-family:'Liberation Sans', sans-serif;">Repositories</div>
<svg style="position:absolute;left:855.6px;top:880px" width="13" height="13" viewBox="0 0 13 13"><circle cx="6.5" cy="6.5" r="6.5" fill="#9ba6c9"/><path d="M5.6 5.2 H7.3 V9.2 H8 V10 H5.2 V9.2 H5.9 V6 H5.6 Z" fill="#34427a"/><circle cx="6.6" cy="3.5" r="0.95" fill="#34427a"/></svg>
<svg style="position:absolute;left:888px;top:884px" width="13" height="14" viewBox="0 0 13 14"><path d="M0.5 2.3 H11.5 M9 0 L11.8 2.3 L9 4.6" stroke="#9ea6c4" stroke-width="1.5" fill="none"/><path d="M12.5 9.9 H1.5 M4.3 7.3 L1.2 9.9 L4.3 12.5" stroke="#1c2a5e" stroke-width="1.7" fill="none"/></svg>
<div class="t" style="left:903.70px;top:886.11px;font-size:10.5px;line-height:10.5px;color:#777d90;font-weight:400;font-family:'Liberation Sans', sans-serif;">Geographic Locations</div>
<div class="t" style="left:890.00px;width:120px;text-align:right;top:908.34px;font-size:12px;line-height:12px;color:#484848;font-weight:700;font-family:'Liberation Sans', sans-serif;">Object Count</div>
<div class="t" style="left:1017.60px;width:80px;text-align:right;top:908.34px;font-size:12px;line-height:12px;color:#484848;font-weight:700;font-family:'Liberation Sans', sans-serif;">Volume</div>
<div class="t" style="left:801.40px;top:930.90px;font-size:14.3px;line-height:14.3px;color:#555;font-weight:400;font-family:'Liberation Sans', sans-serif;">All Repositories</div>
<div class="t" style="left:910.00px;width:100px;text-align:right;top:931.15px;font-size:14px;line-height:14px;color:#555;font-weight:400;font-family:'Liberation Sans', sans-serif;">11.3<span style="font-size:0.8em">k</span></div>
<div class="t" style="left:997.60px;width:100px;text-align:right;top:931.15px;font-size:14px;line-height:14px;color:#555;font-weight:400;font-family:'Liberation Sans', sans-serif;">240.3<span style="font-size:0.8em">MB</span></div>
<svg style="position:absolute;left:770px;top:957.8px" width="17" height="17" viewBox="0 0 20 20"><path d="M0 2.8 L8.2 1.7 V9.4 H0 Z M9.3 1.5 L20 0 V9.4 H9.3 Z M0 10.6 H8.2 V18.3 L0 17.2 Z M9.3 10.6 H20 V20 L9.3 18.5 Z" fill="#0ea5e9"/></svg>
<div class="t" style="left:801.40px;top:960.64px;font-size:12px;line-height:12px;color:#666;font-weight:400;font-family:'Liberation Sans', sans-serif;">Windows File Share</div>
<div class="t" style="left:910.00px;width:100px;text-align:right;top:960.64px;font-size:12px;line-height:12px;color:#666;font-weight:400;font-family:'Liberation Sans', sans-serif;letter-spacing:0.2px;">11.3<span style="font-size:0.8em">k</span></div>
<div class="t" style="left:997.60px;width:100px;text-align:right;top:960.64px;font-size:12px;line-height:12px;color:#666;font-weight:400;font-family:'Liberation Sans', sans-serif;letter-spacing:0.2px;">240.3<span style="font-size:0.8em">MB</span></div>
<div style="position:absolute;left:1124.00px;top:134.00px;width:360.00px;height:858.00px;background:#fff;border:1px solid #ececec;border-radius:3px;box-sizing:border-box;box-shadow:0 1px 3px rgba(0,0,0,0.05);"></div>
<div style="position:absolute;left:1124.00px;top:134.00px;width:360.00px;height:91.00px;background:#f5f5f5;border-left:3px solid #0a2569;border-radius:3px 0 0 0;box-sizing:border-box;"></div>
<div style="position:absolute;left:1124.00px;top:225.00px;width:360.00px;height:1.00px;background:#e9e9e9;"></div>
<div class="t" style="left:1139.60px;top:148.06px;font-size:18px;line-height:18px;color:#444;font-weight:400;font-family:'Liberation Sans', sans-serif;">Corporate Services</div>
<div class="t" style="left:1139.60px;top:178.84px;font-size:12px;line-height:12px;color:#5d6370;font-weight:400;font-family:'Liberation Sans', sans-serif;">Common services across all sites</div>
<div class="t" style="left:1136.00px;top:238.30px;font-size:15px;line-height:15px;color:#4d4d4d;font-weight:400;font-family:'Liberation Sans', sans-serif;">Duplication</div>
<svg style="position:absolute;left:1137.00px;top:261.00px" width="58" height="58" viewBox="0 0 58 58"><circle cx="29.0" cy="29.0" r="26.0" fill="none" stroke="#dddddd" stroke-width="6"/></svg>
<div class="t" style="left:1150.50px;top:281.46px;font-size:16px;line-height:16px;color:#5a5a5a;font-weight:400;font-family:'Liberation Sans', sans-serif;width:31px;text-align:center;">0<span style="font-size:12px">%</span></div>
<div style="position:absolute;left:1164.90px;top:261.00px;width:1.00px;height:6.00px;background:#9a9a9a;"></div>
<div style="position:absolute;left:1220.00px;top:269.50px;width:2.00px;height:41.00px;background:#727a8c;"></div>
<div class="t" style="left:1227.00px;top:271.11px;font-size:10.5px;line-height:10.5px;color:#909090;font-weight:400;font-family:'Liberation Sans', sans-serif;">Duplicated Objects</div>
<div class="t" style="left:1227.50px;top:288.11px;font-size:17px;line-height:17px;color:#555;font-weight:400;font-family:'Liberation Sans', sans-serif;">0</div>
<div style="position:absolute;left:1339.50px;top:269.50px;width:2.00px;height:41.00px;background:#727a8c;"></div>
<div class="t" style="left:1346.00px;top:271.11px;font-size:10.5px;line-height:10.5px;color:#909090;font-weight:400;font-family:'Liberation Sans', sans-serif;">Duplicated Size</div>
<div class="t" style="left:1346.00px;top:288.11px;font-size:17px;line-height:17px;color:#555;font-weight:400;font-family:'Liberation Sans', sans-serif;">0B</div>
<div class="t" style="left:1136.00px;top:337.30px;font-size:15px;line-height:15px;color:#4d4d4d;font-weight:400;font-family:'Liberation Sans', sans-serif;">Object Age</div>
<div style="position:absolute;left:1143.70px;top:373.80px;width:313.60px;height:1.00px;background:#e3e3e3;"></div>
<div class="t" style="left:1143.70px;top:362.54px;font-size:10px;line-height:10px;color:#7a7a7a;font-weight:400;font-family:'Liberation Sans', sans-serif;">12k</div>
<div style="position:absolute;left:1143.70px;top:417.90px;width:313.60px;height:1.00px;background:#e3e3e3;"></div>
<div class="t" style="left:1143.70px;top:406.63px;font-size:10px;line-height:10px;color:#7a7a7a;font-weight:400;font-family:'Liberation Sans', sans-serif;">6k</div>
<div style="position:absolute;left:1143.70px;top:462.10px;width:313.60px;height:1.00px;background:#e3e3e3;"></div>
<div class="t" style="left:1143.70px;top:450.84px;font-size:10px;line-height:10px;color:#7a7a7a;font-weight:400;font-family:'Liberation Sans', sans-serif;">0</div>
<div class="t" style="left:1168.00px;width:80px;text-align:center;top:472.94px;font-size:10px;line-height:10px;color:#777;font-weight:400;font-family:'Liberation Sans', sans-serif;">Suspect</div>
<div class="t" style="left:1236.00px;width:80px;text-align:center;top:472.94px;font-size:10px;line-height:10px;color:#777;font-weight:400;font-family:'Liberation Sans', sans-serif;">New</div>
<div class="t" style="left:1304.00px;width:80px;text-align:center;top:472.94px;font-size:10px;line-height:10px;color:#777;font-weight:400;font-family:'Liberation Sans', sans-serif;">Active</div>
<div style="position:absolute;left:1320.50px;top:381.36px;width:47.00px;height:81.24px;background:#072470;border-radius:3px;"></div>
<div class="t" style="left:1372.00px;width:80px;text-align:center;top:472.94px;font-size:10px;line-height:10px;color:#777;font-weight:400;font-family:'Liberation Sans', sans-serif;">Stale</div>
<div style="position:absolute;left:1388.50px;top:461.72px;width:47.00px;height:0.88px;background:#072470;border-radius:3px;"></div>
<div class="t" style="left:1136.00px;top:505.60px;font-size:15px;line-height:15px;color:#4d4d4d;font-weight:400;font-family:'Liberation Sans', sans-serif;">Object Size</div>
<div style="position:absolute;left:1143.70px;top:542.90px;width:313.60px;height:1.00px;background:#e3e3e3;"></div>
<div class="t" style="left:1143.70px;top:531.63px;font-size:10px;line-height:10px;color:#7a7a7a;font-weight:400;font-family:'Liberation Sans', sans-serif;">10k</div>
<div style="position:absolute;left:1143.70px;top:586.80px;width:313.60px;height:1.00px;background:#e3e3e3;"></div>
<div class="t" style="left:1143.70px;top:575.53px;font-size:10px;line-height:10px;color:#7a7a7a;font-weight:400;font-family:'Liberation Sans', sans-serif;">5k</div>
<div style="position:absolute;left:1143.70px;top:631.10px;width:313.60px;height:1.00px;background:#e3e3e3;"></div>
<div class="t" style="left:1143.70px;top:619.84px;font-size:10px;line-height:10px;color:#7a7a7a;font-weight:400;font-family:'Liberation Sans', sans-serif;">0</div>
<div style="position:absolute;left:1168.30px;top:632.00px;width:1.00px;height:3.00px;background:#ccc;"></div>
<div class="t" style="left:1148.80px;width:40px;text-align:center;top:637.93px;font-size:10px;line-height:10px;color:#777;font-weight:400;font-family:'Liberation Sans', sans-serif;">0</div>
<div style="position:absolute;left:1203.65px;top:632.00px;width:1.00px;height:3.00px;background:#ccc;"></div>
<div class="t" style="left:1184.15px;width:40px;text-align:center;top:637.93px;font-size:10px;line-height:10px;color:#777;font-weight:400;font-family:'Liberation Sans', sans-serif;">1k</div>
<div style="position:absolute;left:1239.00px;top:632.00px;width:1.00px;height:3.00px;background:#ccc;"></div>
<div class="t" style="left:1219.50px;width:40px;text-align:center;top:637.93px;font-size:10px;line-height:10px;color:#777;font-weight:400;font-family:'Liberation Sans', sans-serif;">10k</div>
<div style="position:absolute;left:1274.35px;top:632.00px;width:1.00px;height:3.00px;background:#ccc;"></div>
<div class="t" style="left:1254.85px;width:40px;text-align:center;top:637.93px;font-size:10px;line-height:10px;color:#777;font-weight:400;font-family:'Liberation Sans', sans-serif;">100k</div>
<div style="position:absolute;left:1309.70px;top:632.00px;width:1.00px;height:3.00px;background:#ccc;"></div>
<div class="t" style="left:1290.20px;width:40px;text-align:center;top:637.93px;font-size:10px;line-height:10px;color:#777;font-weight:400;font-family:'Liberation Sans', sans-serif;">1M</div>
<div style="position:absolute;left:1345.05px;top:632.00px;width:1.00px;height:3.00px;background:#ccc;"></div>
<div class="t" style="left:1325.55px;width:40px;text-align:center;top:637.93px;font-size:10px;line-height:10px;color:#777;font-weight:400;font-family:'Liberation Sans', sans-serif;">10M</div>
<div style="position:absolute;left:1380.40px;top:632.00px;width:1.00px;height:3.00px;background:#ccc;"></div>
<div class="t" style="left:1360.90px;width:40px;text-align:center;top:637.93px;font-size:10px;line-height:10px;color:#777;font-weight:400;font-family:'Liberation Sans', sans-serif;">100M</div>
<div style="position:absolute;left:1415.75px;top:632.00px;width:1.00px;height:3.00px;background:#ccc;"></div>
<div class="t" style="left:1396.25px;width:40px;text-align:center;top:637.93px;font-size:10px;line-height:10px;color:#777;font-weight:400;font-family:'Liberation Sans', sans-serif;">1Gb</div>
<div style="position:absolute;left:1451.10px;top:632.00px;width:1.00px;height:3.00px;background:#ccc;"></div>
<div class="t" style="left:1431.60px;width:40px;text-align:center;top:639.63px;font-size:8px;line-height:8px;color:#777;font-weight:400;font-family:'Liberation Sans', sans-serif;">&#8734;</div>
<div style="position:absolute;left:1174.47px;top:543.40px;width:24.00px;height:88.20px;background:#072470;border-radius:3px;"></div>
<div style="position:absolute;left:1209.83px;top:629.84px;width:24.00px;height:1.76px;background:#072470;border-radius:3px;"></div>
<div style="position:absolute;left:1245.17px;top:623.66px;width:24.00px;height:7.94px;background:#072470;border-radius:3px;"></div>
<div style="position:absolute;left:1280.52px;top:631.16px;width:24.00px;height:0.44px;background:#072470;border-radius:3px;"></div>
<div class="t" style="left:1136.00px;top:674.90px;font-size:15px;line-height:15px;color:#4d4d4d;font-weight:400;font-family:'Liberation Sans', sans-serif;">Object Type</div>
<div style="position:absolute;left:1139.00px;top:696.00px;width:1.00px;height:135.00px;background:#d9d9d9;"></div>
<div style="position:absolute;left:1298.20px;top:696.00px;width:1.00px;height:135.00px;background:#e3e3e3;"></div>
<div style="position:absolute;left:1456.80px;top:696.00px;width:1.00px;height:135.00px;background:#e3e3e3;"></div>
<div class="t" style="left:1141.00px;top:701.53px;font-size:10px;line-height:10px;color:#666;font-weight:400;font-family:'Liberation Sans', sans-serif;">Text</div>
<div style="position:absolute;left:1139.50px;top:714.00px;width:316.80px;height:4.00px;background:#072470;border-radius:2px;"></div>
<div class="t" style="left:1141.00px;top:723.89px;font-size:10px;line-height:10px;color:#666;font-weight:400;font-family:'Liberation Sans', sans-serif;">Word Processing</div>
<div style="position:absolute;left:1139.50px;top:736.36px;width:28.51px;height:4.00px;background:#072470;border-radius:2px;"></div>
<div class="t" style="left:1141.00px;top:746.25px;font-size:10px;line-height:10px;color:#666;font-weight:400;font-family:'Liberation Sans', sans-serif;">Page Layout</div>
<div style="position:absolute;left:1139.50px;top:758.72px;width:1.50px;height:4.00px;background:#072470;border-radius:2px;"></div>
<div class="t" style="left:1141.00px;top:768.62px;font-size:10px;line-height:10px;color:#666;font-weight:400;font-family:'Liberation Sans', sans-serif;">Spreadsheet</div>
<div style="position:absolute;left:1139.50px;top:781.08px;width:1.50px;height:4.00px;background:#072470;border-radius:2px;"></div>
<div class="t" style="left:1141.00px;top:790.98px;font-size:10px;line-height:10px;color:#666;font-weight:400;font-family:'Liberation Sans', sans-serif;">Data</div>
<div class="t" style="left:1141.00px;top:813.33px;font-size:10px;line-height:10px;color:#666;font-weight:400;font-family:'Liberation Sans', sans-serif;">Other</div>
<div style="position:absolute;left:1139.50px;top:825.80px;width:1.50px;height:4.00px;background:#072470;border-radius:2px;"></div>
<div class="t" style="left:1119.40px;width:40px;text-align:center;top:839.53px;font-size:10px;line-height:10px;color:#777;font-weight:400;font-family:'Liberation Sans', sans-serif;">0</div>
<div class="t" style="left:1278.10px;width:40px;text-align:center;top:839.53px;font-size:10px;line-height:10px;color:#777;font-weight:400;font-family:'Liberation Sans', sans-serif;">6k</div>
<div class="t" style="left:1436.80px;width:40px;text-align:center;top:839.53px;font-size:10px;line-height:10px;color:#777;font-weight:400;font-family:'Liberation Sans', sans-serif;">11k</div>
<div style="position:absolute;left:1124.00px;top:869.00px;width:360.00px;height:1.00px;background:#ececec;"></div>
<div class="t" style="left:1136.00px;top:882.90px;font-size:15px;line-height:15px;color:#4d4d4d;font-weight:400;font-family:'Liberation Sans', sans-serif;">Repositories</div>
<svg style="position:absolute;left:1225.6px;top:880px" width="13" height="13" viewBox="0 0 13 13"><circle cx="6.5" cy="6.5" r="6.5" fill="#9ba6c9"/><path d="M5.6 5.2 H7.3 V9.2 H8 V10 H5.2 V9.2 H5.9 V6 H5.6 Z" fill="#34427a"/><circle cx="6.6" cy="3.5" r="0.95" fill="#34427a"/></svg>
<svg style="position:absolute;left:1258px;top:884px" width="13" height="14" viewBox="0 0 13 14"><path d="M0.5 2.3 H11.5 M9 0 L11.8 2.3 L9 4.6" stroke="#9ea6c4" stroke-width="1.5" fill="none"/><path d="M12.5 9.9 H1.5 M4.3 7.3 L1.2 9.9 L4.3 12.5" stroke="#1c2a5e" stroke-width="1.7" fill="none"/></svg>
<div class="t" style="left:1273.70px;top:886.11px;font-size:10.5px;line-height:10.5px;color:#777d90;font-weight:400;font-family:'Liberation Sans', sans-serif;">Geographic Locations</div>
<div class="t" style="left:1266.50px;width:120px;text-align:right;top:908.34px;font-size:12px;line-height:12px;color:#484848;font-weight:700;font-family:'Liberation Sans', sans-serif;">Object Count</div>
<div class="t" style="left:1387.60px;width:80px;text-align:right;top:908.34px;font-size:12px;line-height:12px;color:#484848;font-weight:700;font-family:'Liberation Sans', sans-serif;">Volume</div>
<div class="t" style="left:1172.00px;top:930.90px;font-size:14.3px;line-height:14.3px;color:#555;font-weight:400;font-family:'Liberation Sans', sans-serif;">All Repositories</div>
<div class="t" style="left:1286.50px;width:100px;text-align:right;top:931.15px;font-size:14px;line-height:14px;color:#555;font-weight:400;font-family:'Liberation Sans', sans-serif;">11.1<span style="font-size:0.8em">k</span></div>
<div class="t" style="left:1367.60px;width:100px;text-align:right;top:931.15px;font-size:14px;line-height:14px;color:#555;font-weight:400;font-family:'Liberation Sans', sans-serif;">511.2<span style="font-size:0.8em">MB</span></div>
<svg style="position:absolute;left:1140px;top:957.8px" width="17" height="17" viewBox="0 0 20 20"><path d="M0 2.8 L8.2 1.7 V9.4 H0 Z M9.3 1.5 L20 0 V9.4 H9.3 Z M0 10.6 H8.2 V18.3 L0 17.2 Z M9.3 10.6 H20 V20 L9.3 18.5 Z" fill="#0ea5e9"/></svg>
<div class="t" style="left:1172.00px;top:960.64px;font-size:12px;line-height:12px;color:#666;font-weight:400;font-family:'Liberation Sans', sans-serif;">Windows File Share</div>
<div class="t" style="left:1286.50px;width:100px;text-align:right;top:960.64px;font-size:12px;line-height:12px;color:#666;font-weight:400;font-family:'Liberation Sans', sans-serif;letter-spacing:0.2px;">11.1<span style="font-size:0.8em">k</span></div>
<div class="t" style="left:1367.60px;width:100px;text-align:right;top:960.64px;font-size:12px;line-height:12px;color:#666;font-weight:400;font-family:'Liberation Sans', sans-serif;letter-spacing:0.2px;">511.2<span style="font-size:0.8em">MB</span></div>
</div>
<div style="position:absolute;left:14.50px;top:1116.00px;width:905.00px;height:6.00px;background:#c6c6c6;border-radius:3px;"></div>
<div style="position:absolute;left:1460.00px;top:66.00px;width:525.00px;height:861.50px;background:#fff;border:1px solid #e9e9e9;border-radius:4px;box-sizing:border-box;box-shadow:0 0 3px rgba(0,0,0,0.04);"></div>
<div class="t" style="left:1481.00px;top:81.34px;font-size:12px;line-height:12px;color:#666;font-weight:400;font-family:'Liberation Sans', sans-serif;">Business Unit</div>
<div class="t" style="left:1481.00px;top:102.47px;font-size:21px;line-height:21px;color:#333;font-weight:400;font-family:'Liberation Sans', sans-serif;">All Data</div>
<div class="t" style="left:1481.00px;top:136.84px;font-size:12px;line-height:12px;color:#666;font-weight:400;font-family:'Liberation Sans', sans-serif;">Repository</div>
<svg style="position:absolute;left:1481px;top:158px" width="21" height="21" viewBox="0 0 20 20"><path d="M0 2.8 L8.2 1.7 V9.4 H0 Z M9.3 1.5 L20 0 V9.4 H9.3 Z M0 10.6 H8.2 V18.3 L0 17.2 Z M9.3 10.6 H20 V20 L9.3 18.5 Z" fill="#0ea5e9"/></svg>
<div class="t" style="left:1513.00px;top:157.22px;font-size:21px;line-height:21px;color:#333;font-weight:400;font-family:'Liberation Sans', sans-serif;">Windows File Share</div>
<div style="position:absolute;left:1460.00px;top:211.00px;width:524.00px;height:1.00px;background:#e8e8e8;"></div>
<div class="t" style="left:1481.00px;top:224.22px;font-size:21px;line-height:21px;color:#333;font-weight:400;font-family:'Liberation Sans', sans-serif;">Containers</div>
<svg style="position:absolute;left:1589.7px;top:222px" width="12" height="12" viewBox="0 0 13 13"><circle cx="6.5" cy="6.5" r="6.5" fill="#9ba6c9"/><path d="M5.6 5.2 H7.3 V9.2 H8 V10 H5.2 V9.2 H5.9 V6 H5.6 Z" fill="#34427a"/><circle cx="6.6" cy="3.5" r="0.95" fill="#34427a"/></svg>
<svg style="position:absolute;left:1621px;top:229px" width="13" height="14" viewBox="0 0 13 14"><path d="M0.5 2.3 H11.5 M9 0 L11.8 2.3 L9 4.6" stroke="#9ea6c4" stroke-width="1.5" fill="none"/><path d="M12.5 9.9 H1.5 M4.3 7.3 L1.2 9.9 L4.3 12.5" stroke="#1c2a5e" stroke-width="1.7" fill="none"/></svg>
<div class="t" style="left:1639.00px;top:229.84px;font-size:12px;line-height:12px;color:#777d90;font-weight:400;font-family:'Liberation Sans', sans-serif;">Objects</div>
<div style="position:absolute;left:1481.00px;top:256.00px;width:483.00px;height:658.00px;background:#f6f7f9;border:1px solid #e6e8eb;box-sizing:border-box;"></div>
<div style="position:absolute;left:1496.50px;top:266.00px;width:13.00px;height:13.00px;background:#fff;border:1px solid #979797;border-radius:2px;box-sizing:border-box;"></div>
<div class="t" style="left:1514.60px;top:266.54px;font-size:12px;line-height:12px;color:#666;font-weight:400;font-family:'Liberation Sans', sans-serif;">0 of 1.2k containers selected</div>
<svg style="position:absolute;left:1890px;top:268px" width="11" height="10" viewBox="0 0 11 10"><rect x="0" y="1" width="11" height="1.3" fill="#555"/><rect x="0" y="4.5" width="11" height="1.3" fill="#555"/><rect x="0" y="8" width="11" height="1.3" fill="#555"/></svg>
<div class="t" style="left:1903.80px;top:267.87px;font-size:11.5px;line-height:11.5px;color:#666;font-weight:400;font-family:'Liberation Sans', sans-serif;">Actions</div>
<div style="position:absolute;left:1946px;top:272px;width:0;height:0;border-left:3px solid transparent;border-right:3px solid transparent;border-top:3px solid #555;"></div>
<div class="t" style="left:1516.00px;top:291.14px;font-size:12px;line-height:12px;color:#3c3c3c;font-weight:700;font-family:'Liberation Sans', sans-serif;">Name</div>
<div class="t" style="left:1556.70px;top:291.99px;font-size:11px;line-height:11px;color:#e0457b;font-weight:700;font-family:'Liberation Mono', monospace;">Path</div>
<div class="t" style="left:1694.40px;width:120px;text-align:right;top:291.14px;font-size:12px;line-height:12px;color:#3c3c3c;font-weight:700;font-family:'Liberation Sans', sans-serif;">Object Count</div>
<div class="t" style="left:1849.00px;top:291.14px;font-size:12px;line-height:12px;color:#3c3c3c;font-weight:700;font-family:'Liberation Sans', sans-serif;">Duplication</div>
<div style="position:absolute;left:1481px;top:309px;width:483px;height:598.5px;overflow:hidden;">
<div style="position:absolute;left:6.50px;top:0.80px;width:468.00px;height:71.80px;background:#d6e3fb;border:1px solid #e9ebee;border-left:3px solid #9aa1ab;box-sizing:border-box;"></div>
<div style="position:absolute;left:15.40px;top:12.80px;width:13.00px;height:13.00px;background:#fff;border:1px solid #979797;border-radius:2px;box-sizing:border-box;"></div>
<div class="t" style="left:36.00px;top:10.84px;font-size:12px;line-height:12px;color:#383838;font-weight:700;font-family:'Liberation Sans', sans-serif;">Text Support Documents</div>
<div class="t" style="left:36.00px;top:33.79px;font-size:11px;line-height:11px;color:#db77a0;font-weight:400;font-family:'Liberation Mono', monospace;">\\AN-DC-VM\Engineeri...xt</div>
<div class="t" style="left:36.00px;top:50.79px;font-size:11px;line-height:11px;color:#db77a0;font-weight:400;font-family:'Liberation Mono', monospace;">Support&nbsp;Documents</div>
<div class="t" style="left:254.00px;width:80px;text-align:right;top:29.35px;font-size:14px;line-height:14px;color:#5e6470;font-weight:400;font-family:'Liberation Sans', sans-serif;">10<span style="font-size:0.8em">k</span></div>
<svg style="position:absolute;left:382.30px;top:19.20px" width="35" height="35" viewBox="0 0 35 35"><circle cx="17.5" cy="17.5" r="16.5" fill="none" stroke="#e0e0e0" stroke-width="2"/><circle cx="17.5" cy="17.5" r="16.5" fill="none" stroke="#2b3a6e" stroke-width="2" stroke-dasharray="103.67 103.67" transform="rotate(-90 17.5 17.5)"/></svg>
<div class="t" style="left:380.00px;width:40px;text-align:center;top:31.01px;font-size:10.5px;line-height:10.5px;color:#7a7a7a;font-weight:400;font-family:'Liberation Sans', sans-serif;letter-spacing:-0.2px;">100<span style="font-size:9px">%</span></div>
<svg style="position:absolute;left:449.30px;top:29.20px" width="17" height="15" viewBox="0 0 17 15"><g fill="none" stroke="#3b4a7a" stroke-width="1.3"><circle cx="8.3" cy="2.2" r="1.7"/><circle cx="2.3" cy="11.9" r="1.8"/><circle cx="8.3" cy="11.9" r="1.8"/><circle cx="14.3" cy="11.9" r="1.8"/><path d="M8.3 3.9 V10.1 M2.3 10.1 V7 H14.3 V10.1"/></g></svg>
<div style="position:absolute;left:6.50px;top:77.30px;width:468.00px;height:71.80px;background:#fff;border:1px solid #e9ebee;border-left:3px solid #9aa1ab;box-sizing:border-box;"></div>
<div style="position:absolute;left:15.40px;top:89.30px;width:13.00px;height:13.00px;background:#fff;border:1px solid #979797;border-radius:2px;box-sizing:border-box;"></div>
<div class="t" style="left:36.00px;top:87.34px;font-size:12px;line-height:12px;color:#383838;font-weight:700;font-family:'Liberation Sans', sans-serif;">Text Support Documents</div>
<div class="t" style="left:36.00px;top:110.29px;font-size:11px;line-height:11px;color:#db77a0;font-weight:400;font-family:'Liberation Mono', monospace;">\\AN-DC-VM\Corporate...t&nbsp;Support</div>
<div class="t" style="left:36.00px;top:127.29px;font-size:11px;line-height:11px;color:#db77a0;font-weight:400;font-family:'Liberation Mono', monospace;">Documents</div>
<div class="t" style="left:254.00px;width:80px;text-align:right;top:105.85px;font-size:14px;line-height:14px;color:#5e6470;font-weight:400;font-family:'Liberation Sans', sans-serif;">10<span style="font-size:0.8em">k</span></div>
<svg style="position:absolute;left:382.30px;top:95.70px" width="35" height="35" viewBox="0 0 35 35"><circle cx="17.5" cy="17.5" r="16.5" fill="none" stroke="#e0e0e0" stroke-width="2"/><circle cx="17.5" cy="17.5" r="16.5" fill="none" stroke="#2b3a6e" stroke-width="2" stroke-dasharray="103.67 103.67" transform="rotate(-90 17.5 17.5)"/></svg>
<div class="t" style="left:380.00px;width:40px;text-align:center;top:107.51px;font-size:10.5px;line-height:10.5px;color:#7a7a7a;font-weight:400;font-family:'Liberation Sans', sans-serif;letter-spacing:-0.2px;">100<span style="font-size:9px">%</span></div>
<svg style="position:absolute;left:449.30px;top:105.70px" width="17" height="15" viewBox="0 0 17 15"><g fill="none" stroke="#3b4a7a" stroke-width="1.3"><circle cx="8.3" cy="2.2" r="1.7"/><circle cx="2.3" cy="11.9" r="1.8"/><circle cx="8.3" cy="11.9" r="1.8"/><circle cx="14.3" cy="11.9" r="1.8"/><path d="M8.3 3.9 V10.1 M2.3 10.1 V7 H14.3 V10.1"/></g></svg>
<div style="position:absolute;left:6.50px;top:153.80px;width:468.00px;height:71.80px;background:#fff;border:1px solid #e9ebee;border-left:3px solid #9aa1ab;box-sizing:border-box;"></div>
<div style="position:absolute;left:15.40px;top:165.80px;width:13.00px;height:13.00px;background:#fff;border:1px solid #979797;border-radius:2px;box-sizing:border-box;"></div>
<div class="t" style="left:36.00px;top:163.84px;font-size:12px;line-height:12px;color:#383838;font-weight:700;font-family:'Liberation Sans', sans-serif;">Text Support Documents</div>
<div class="t" style="left:36.00px;top:186.79px;font-size:11px;line-height:11px;color:#db77a0;font-weight:400;font-family:'Liberation Mono', monospace;">\\AN-DC-VM\Marketing...t&nbsp;Support</div>
<div class="t" style="left:36.00px;top:203.79px;font-size:11px;line-height:11px;color:#db77a0;font-weight:400;font-family:'Liberation Mono', monospace;">Documents</div>
<div class="t" style="left:254.00px;width:80px;text-align:right;top:182.35px;font-size:14px;line-height:14px;color:#5e6470;font-weight:400;font-family:'Liberation Sans', sans-serif;">10<span style="font-size:0.8em">k</span></div>
<svg style="position:absolute;left:382.30px;top:172.20px" width="35" height="35" viewBox="0 0 35 35"><circle cx="17.5" cy="17.5" r="16.5" fill="none" stroke="#e0e0e0" stroke-width="2"/><circle cx="17.5" cy="17.5" r="16.5" fill="none" stroke="#2b3a6e" stroke-width="2" stroke-dasharray="103.67 103.67" transform="rotate(-90 17.5 17.5)"/></svg>
<div class="t" style="left:380.00px;width:40px;text-align:center;top:184.01px;font-size:10.5px;line-height:10.5px;color:#7a7a7a;font-weight:400;font-family:'Liberation Sans', sans-serif;letter-spacing:-0.2px;">100<span style="font-size:9px">%</span></div>
<svg style="position:absolute;left:449.30px;top:182.20px" width="17" height="15" viewBox="0 0 17 15"><g fill="none" stroke="#3b4a7a" stroke-width="1.3"><circle cx="8.3" cy="2.2" r="1.7"/><circle cx="2.3" cy="11.9" r="1.8"/><circle cx="8.3" cy="11.9" r="1.8"/><circle cx="14.3" cy="11.9" r="1.8"/><path d="M8.3 3.9 V10.1 M2.3 10.1 V7 H14.3 V10.1"/></g></svg>
<div style="position:absolute;left:6.50px;top:230.30px;width:468.00px;height:71.80px;background:#fff;border:1px solid #e9ebee;border-left:3px solid #9aa1ab;box-sizing:border-box;"></div>
<div style="position:absolute;left:15.40px;top:242.30px;width:13.00px;height:13.00px;background:#fff;border:1px solid #979797;border-radius:2px;box-sizing:border-box;"></div>
<div class="t" style="left:36.00px;top:240.34px;font-size:12px;line-height:12px;color:#383838;font-weight:700;font-family:'Liberation Sans', sans-serif;">Word Support Documents</div>
<div class="t" style="left:36.00px;top:263.29px;font-size:11px;line-height:11px;color:#db77a0;font-weight:400;font-family:'Liberation Mono', monospace;">\\AN-DC-VM\Engineeri...rd</div>
<div class="t" style="left:36.00px;top:280.29px;font-size:11px;line-height:11px;color:#db77a0;font-weight:400;font-family:'Liberation Mono', monospace;">Support&nbsp;Documents</div>
<div class="t" style="left:254.00px;width:80px;text-align:right;top:258.85px;font-size:14px;line-height:14px;color:#5e6470;font-weight:400;font-family:'Liberation Sans', sans-serif;">1<span style="font-size:0.8em">k</span></div>
<svg style="position:absolute;left:382.30px;top:248.70px" width="35" height="35" viewBox="0 0 35 35"><circle cx="17.5" cy="17.5" r="16.5" fill="none" stroke="#e0e0e0" stroke-width="2"/><circle cx="17.5" cy="17.5" r="16.5" fill="none" stroke="#2b3a6e" stroke-width="2" stroke-dasharray="103.67 103.67" transform="rotate(-90 17.5 17.5)"/></svg>
<div class="t" style="left:380.00px;width:40px;text-align:center;top:260.51px;font-size:10.5px;line-height:10.5px;color:#7a7a7a;font-weight:400;font-family:'Liberation Sans', sans-serif;letter-spacing:-0.2px;">100<span style="font-size:9px">%</span></div>
<svg style="position:absolute;left:449.30px;top:258.70px" width="17" height="15" viewBox="0 0 17 15"><g fill="none" stroke="#3b4a7a" stroke-width="1.3"><circle cx="8.3" cy="2.2" r="1.7"/><circle cx="2.3" cy="11.9" r="1.8"/><circle cx="8.3" cy="11.9" r="1.8"/><circle cx="14.3" cy="11.9" r="1.8"/><path d="M8.3 3.9 V10.1 M2.3 10.1 V7 H14.3 V10.1"/></g></svg>
<div style="position:absolute;left:6.50px;top:306.80px;width:468.00px;height:71.80px;background:#fff;border:1px solid #e9ebee;border-left:3px solid #9aa1ab;box-sizing:border-box;"></div>
<div style="position:absolute;left:15.40px;top:318.80px;width:13.00px;height:13.00px;background:#fff;border:1px solid #979797;border-radius:2px;box-sizing:border-box;"></div>
<div class="t" style="left:36.00px;top:316.84px;font-size:12px;line-height:12px;color:#383838;font-weight:700;font-family:'Liberation Sans', sans-serif;">Word Support Documents</div>
<div class="t" style="left:36.00px;top:339.79px;font-size:11px;line-height:11px;color:#db77a0;font-weight:400;font-family:'Liberation Mono', monospace;">\\AN-DC-VM\Corporate...d&nbsp;Support</div>
<div class="t" style="left:36.00px;top:356.79px;font-size:11px;line-height:11px;color:#db77a0;font-weight:400;font-family:'Liberation Mono', monospace;">Documents</div>
<div class="t" style="left:254.00px;width:80px;text-align:right;top:335.35px;font-size:14px;line-height:14px;color:#5e6470;font-weight:400;font-family:'Liberation Sans', sans-serif;">1<span style="font-size:0.8em">k</span></div>
<svg style="position:absolute;left:382.30px;top:325.20px" width="35" height="35" viewBox="0 0 35 35"><circle cx="17.5" cy="17.5" r="16.5" fill="none" stroke="#e0e0e0" stroke-width="2"/><circle cx="17.5" cy="17.5" r="16.5" fill="none" stroke="#2b3a6e" stroke-width="2" stroke-dasharray="103.67 103.67" transform="rotate(-90 17.5 17.5)"/></svg>
<div class="t" style="left:380.00px;width:40px;text-align:center;top:337.01px;font-size:10.5px;line-height:10.5px;color:#7a7a7a;font-weight:400;font-family:'Liberation Sans', sans-serif;letter-spacing:-0.2px;">100<span style="font-size:9px">%</span></div>
<svg style="position:absolute;left:449.30px;top:335.20px" width="17" height="15" viewBox="0 0 17 15"><g fill="none" stroke="#3b4a7a" stroke-width="1.3"><circle cx="8.3" cy="2.2" r="1.7"/><circle cx="2.3" cy="11.9" r="1.8"/><circle cx="8.3" cy="11.9" r="1.8"/><circle cx="14.3" cy="11.9" r="1.8"/><path d="M8.3 3.9 V10.1 M2.3 10.1 V7 H14.3 V10.1"/></g></svg>
<div style="position:absolute;left:6.50px;top:383.30px;width:468.00px;height:71.80px;background:#fff;border:1px solid #e9ebee;border-left:3px solid #9aa1ab;box-sizing:border-box;"></div>
<div style="position:absolute;left:15.40px;top:395.30px;width:13.00px;height:13.00px;background:#fff;border:1px solid #979797;border-radius:2px;box-sizing:border-box;"></div>
<div class="t" style="left:36.00px;top:393.34px;font-size:12px;line-height:12px;color:#383838;font-weight:700;font-family:'Liberation Sans', sans-serif;">Word Support Documents</div>
<div class="t" style="left:36.00px;top:416.29px;font-size:11px;line-height:11px;color:#db77a0;font-weight:400;font-family:'Liberation Mono', monospace;">\\AN-DC-VM\Marketing...d&nbsp;Support</div>
<div class="t" style="left:36.00px;top:433.29px;font-size:11px;line-height:11px;color:#db77a0;font-weight:400;font-family:'Liberation Mono', monospace;">Documents</div>
<div class="t" style="left:254.00px;width:80px;text-align:right;top:411.85px;font-size:14px;line-height:14px;color:#5e6470;font-weight:400;font-family:'Liberation Sans', sans-serif;">1<span style="font-size:0.8em">k</span></div>
<svg style="position:absolute;left:382.30px;top:401.70px" width="35" height="35" viewBox="0 0 35 35"><circle cx="17.5" cy="17.5" r="16.5" fill="none" stroke="#e0e0e0" stroke-width="2"/><circle cx="17.5" cy="17.5" r="16.5" fill="none" stroke="#2b3a6e" stroke-width="2" stroke-dasharray="103.67 103.67" transform="rotate(-90 17.5 17.5)"/></svg>
<div class="t" style="left:380.00px;width:40px;text-align:center;top:413.51px;font-size:10.5px;line-height:10.5px;color:#7a7a7a;font-weight:400;font-family:'Liberation Sans', sans-serif;letter-spacing:-0.2px;">100<span style="font-size:9px">%</span></div>
<svg style="position:absolute;left:449.30px;top:411.70px" width="17" height="15" viewBox="0 0 17 15"><g fill="none" stroke="#3b4a7a" stroke-width="1.3"><circle cx="8.3" cy="2.2" r="1.7"/><circle cx="2.3" cy="11.9" r="1.8"/><circle cx="8.3" cy="11.9" r="1.8"/><circle cx="14.3" cy="11.9" r="1.8"/><path d="M8.3 3.9 V10.1 M2.3 10.1 V7 H14.3 V10.1"/></g></svg>
<div style="position:absolute;left:6.50px;top:459.80px;width:468.00px;height:71.80px;background:#fff;border:1px solid #e9ebee;border-left:3px solid #9aa1ab;box-sizing:border-box;"></div>
<div style="position:absolute;left:15.40px;top:471.80px;width:13.00px;height:13.00px;background:#fff;border:1px solid #979797;border-radius:2px;box-sizing:border-box;"></div>
<div class="t" style="left:36.00px;top:469.84px;font-size:12px;line-height:12px;color:#383838;font-weight:700;font-family:'Liberation Sans', sans-serif;">Client Data and Logs</div>
<div class="t" style="left:36.00px;top:492.79px;font-size:11px;line-height:11px;color:#db77a0;font-weight:400;font-family:'Liberation Mono', monospace;">\\AN-DC-VM\Operation...Client</div>
<div class="t" style="left:36.00px;top:509.79px;font-size:11px;line-height:11px;color:#db77a0;font-weight:400;font-family:'Liberation Mono', monospace;">Data&nbsp;and&nbsp;Logs</div>
<div class="t" style="left:254.00px;width:80px;text-align:right;top:488.35px;font-size:14px;line-height:14px;color:#5e6470;font-weight:400;font-family:'Liberation Sans', sans-serif;">151</div>
<svg style="position:absolute;left:382.30px;top:478.20px" width="35" height="35" viewBox="0 0 35 35"><circle cx="17.5" cy="17.5" r="16.5" fill="none" stroke="#e0e0e0" stroke-width="2"/><circle cx="17.5" cy="17.5" r="16.5" fill="none" stroke="#2b3a6e" stroke-width="2" stroke-dasharray="74.64 103.67" transform="rotate(-90 17.5 17.5)"/></svg>
<div class="t" style="left:380.00px;width:40px;text-align:center;top:490.01px;font-size:10.5px;line-height:10.5px;color:#7a7a7a;font-weight:400;font-family:'Liberation Sans', sans-serif;letter-spacing:-0.2px;">72<span style="font-size:9px">%</span></div>
<svg style="position:absolute;left:449.30px;top:488.20px" width="17" height="15" viewBox="0 0 17 15"><g fill="none" stroke="#3b4a7a" stroke-width="1.3"><circle cx="8.3" cy="2.2" r="1.7"/><circle cx="2.3" cy="11.9" r="1.8"/><circle cx="8.3" cy="11.9" r="1.8"/><circle cx="14.3" cy="11.9" r="1.8"/><path d="M8.3 3.9 V10.1 M2.3 10.1 V7 H14.3 V10.1"/></g></svg>
<div style="position:absolute;left:6.50px;top:536.30px;width:468.00px;height:54.00px;background:#fff;border:1px solid #e9ebee;border-left:3px solid #9aa1ab;box-sizing:border-box;"></div>
<div style="position:absolute;left:15.40px;top:548.30px;width:13.00px;height:13.00px;background:#fff;border:1px solid #979797;border-radius:2px;box-sizing:border-box;"></div>
<div class="t" style="left:36.00px;top:546.34px;font-size:12px;line-height:12px;color:#383838;font-weight:700;font-family:'Liberation Sans', sans-serif;">Privacy Data</div>
<div class="t" style="left:36.00px;top:569.29px;font-size:11px;line-height:11px;color:#db77a0;font-weight:400;font-family:'Liberation Mono', monospace;">\\AN-DC-VM\Finance\Privacy&nbsp;Data</div>
<div class="t" style="left:254.00px;width:80px;text-align:right;top:555.95px;font-size:14px;line-height:14px;color:#5e6470;font-weight:400;font-family:'Liberation Sans', sans-serif;">106</div>
<svg style="position:absolute;left:382.30px;top:545.80px" width="35" height="35" viewBox="0 0 35 35"><circle cx="17.5" cy="17.5" r="16.5" fill="none" stroke="#e0e0e0" stroke-width="2"/><circle cx="17.5" cy="17.5" r="16.5" fill="none" stroke="#2b3a6e" stroke-width="2" stroke-dasharray="94.34 103.67" transform="rotate(-90 17.5 17.5)"/></svg>
<div class="t" style="left:380.00px;width:40px;text-align:center;top:557.61px;font-size:10.5px;line-height:10.5px;color:#7a7a7a;font-weight:400;font-family:'Liberation Sans', sans-serif;letter-spacing:-0.2px;">91<span style="font-size:9px">%</span></div>
<svg style="position:absolute;left:449.30px;top:555.80px" width="17" height="15" viewBox="0 0 17 15"><g fill="none" stroke="#3b4a7a" stroke-width="1.3"><circle cx="8.3" cy="2.2" r="1.7"/><circle cx="2.3" cy="11.9" r="1.8"/><circle cx="8.3" cy="11.9" r="1.8"/><circle cx="14.3" cy="11.9" r="1.8"/><path d="M8.3 3.9 V10.1 M2.3 10.1 V7 H14.3 V10.1"/></g></svg>
<div style="position:absolute;left:6.50px;top:595.00px;width:468.00px;height:40.00px;background:#fff;border:1px solid #e9ebee;border-left:3px solid #9aa1ab;box-sizing:border-box;"></div>
</div>
<div style="position:absolute;left:1948.80px;top:311.00px;width:6.50px;height:80.00px;background:#adb4c6;border-radius:3px;"></div>
</body></html>
